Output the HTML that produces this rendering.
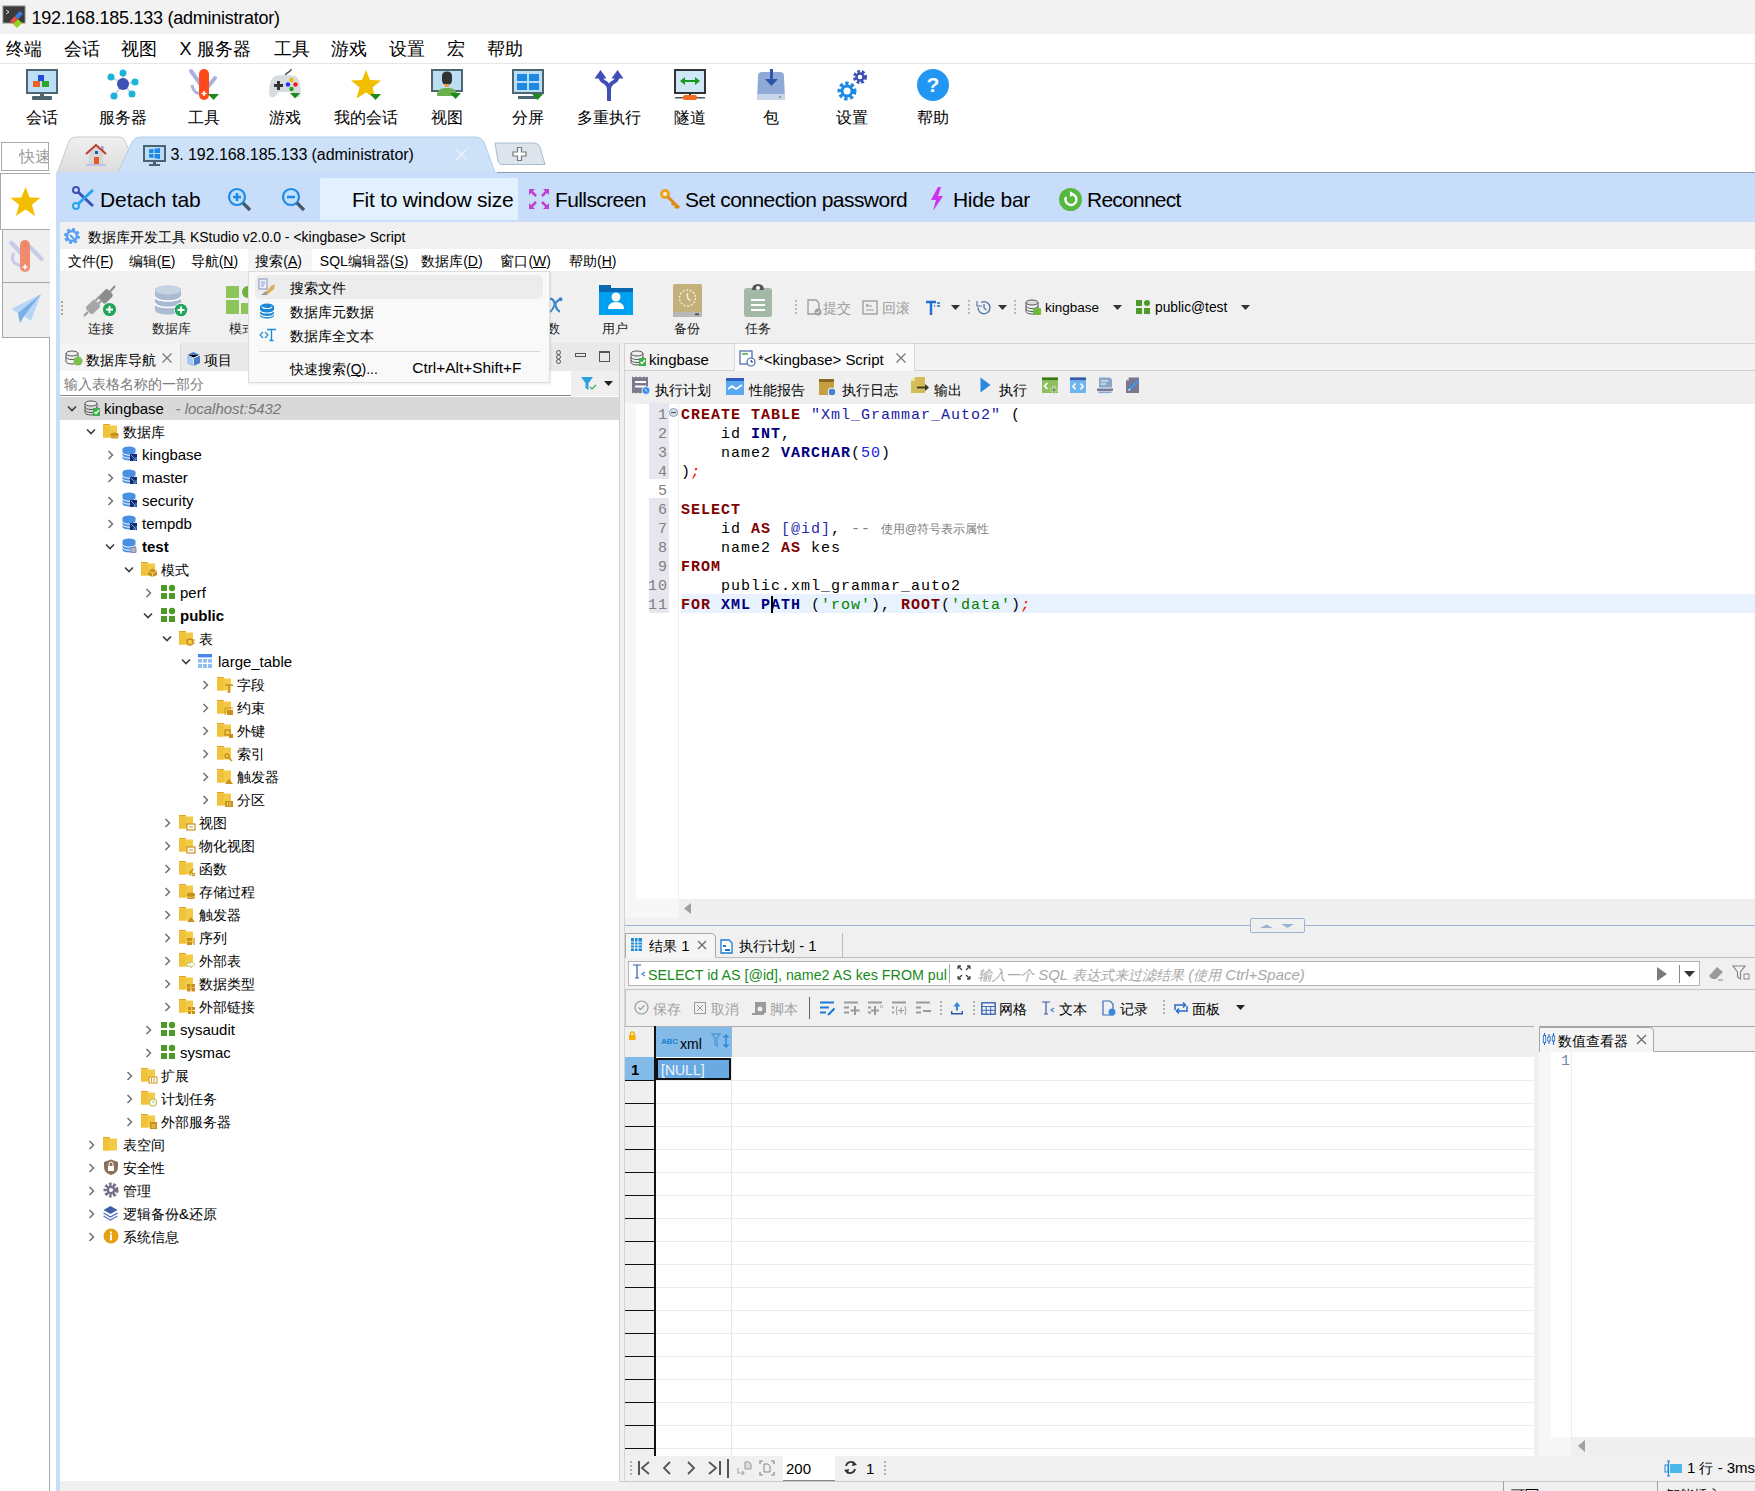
<!DOCTYPE html><html><head><meta charset="utf-8"><style>
html,body{margin:0;padding:0;width:1755px;height:1491px;overflow:hidden;background:#fff;font-family:"Liberation Sans",sans-serif;}
.r{position:absolute;box-sizing:border-box;}
.t{position:absolute;white-space:pre;}
svg.r{overflow:visible}
</style></head><body>
<div class="r" style="left:0px;top:0px;width:1755px;height:34px;background:#f2f2f2;"></div>
<svg class="r" style="left:2px;top:5px;" width="24" height="24" viewBox="0 0 24 24"><rect x="1" y="1" width="22" height="17" fill="#3b3b3b" stroke="#8a8a8a" stroke-width="1"/><path d="M4 5 L7 7 L4 9" stroke="#ddd" fill="none" stroke-width="1"/><path d="M8 16 L13 11 L16 14 L11 19 Z" fill="#e84b4b"/><path d="M13 11 L18 6 L21 9 L16 14 Z" fill="#3a7be0"/><path d="M11 19 L16 14 L20 18 L15 23 Z" fill="#8fd61a"/></svg>
<div class="t" style="left:31.6px;top:-2.24px;font-size:18.00px;line-height:40px;color:#000;font-weight:400;font-family:'Liberation Sans', sans-serif;letter-spacing:-0.26px;">192.168.185.133 (administrator)</div>
<div class="r" style="left:0px;top:34px;width:1755px;height:29px;background:#fff;"></div>
<div class="r" style="left:0px;top:63px;width:1755px;height:1px;background:#e6e6e6;"></div>
<div class="t" style="left:6px;top:29.26px;font-size:18.00px;line-height:40px;color:#000;font-weight:400;font-family:'Liberation Sans', sans-serif;">终端</div>
<div class="t" style="left:64px;top:29.26px;font-size:18.00px;line-height:40px;color:#000;font-weight:400;font-family:'Liberation Sans', sans-serif;">会话</div>
<div class="t" style="left:121px;top:29.26px;font-size:18.00px;line-height:40px;color:#000;font-weight:400;font-family:'Liberation Sans', sans-serif;">视图</div>
<div class="t" style="left:179.5px;top:29.26px;font-size:18.00px;line-height:40px;color:#000;font-weight:400;font-family:'Liberation Sans', sans-serif;">X 服务器</div>
<div class="t" style="left:273.5px;top:29.26px;font-size:18.00px;line-height:40px;color:#000;font-weight:400;font-family:'Liberation Sans', sans-serif;">工具</div>
<div class="t" style="left:331px;top:29.26px;font-size:18.00px;line-height:40px;color:#000;font-weight:400;font-family:'Liberation Sans', sans-serif;">游戏</div>
<div class="t" style="left:389px;top:29.26px;font-size:18.00px;line-height:40px;color:#000;font-weight:400;font-family:'Liberation Sans', sans-serif;">设置</div>
<div class="t" style="left:447px;top:29.26px;font-size:18.00px;line-height:40px;color:#000;font-weight:400;font-family:'Liberation Sans', sans-serif;">宏</div>
<div class="t" style="left:487px;top:29.26px;font-size:18.00px;line-height:40px;color:#000;font-weight:400;font-family:'Liberation Sans', sans-serif;">帮助</div>
<div class="r" style="left:0px;top:64px;width:1755px;height:73px;background:#fff;"></div>
<div class="t" style="left:26.0px;top:97.96px;font-size:16.00px;line-height:40px;color:#000;font-weight:400;font-family:'Liberation Sans', sans-serif;">会话</div>
<div class="t" style="left:99.0px;top:97.96px;font-size:16.00px;line-height:40px;color:#000;font-weight:400;font-family:'Liberation Sans', sans-serif;">服务器</div>
<div class="t" style="left:188.0px;top:97.96px;font-size:16.00px;line-height:40px;color:#000;font-weight:400;font-family:'Liberation Sans', sans-serif;">工具</div>
<div class="t" style="left:269.0px;top:97.96px;font-size:16.00px;line-height:40px;color:#000;font-weight:400;font-family:'Liberation Sans', sans-serif;">游戏</div>
<div class="t" style="left:334.0px;top:97.96px;font-size:16.00px;line-height:40px;color:#000;font-weight:400;font-family:'Liberation Sans', sans-serif;">我的会话</div>
<div class="t" style="left:431.0px;top:97.96px;font-size:16.00px;line-height:40px;color:#000;font-weight:400;font-family:'Liberation Sans', sans-serif;">视图</div>
<div class="t" style="left:512.0px;top:97.96px;font-size:16.00px;line-height:40px;color:#000;font-weight:400;font-family:'Liberation Sans', sans-serif;">分屏</div>
<div class="t" style="left:577.0px;top:97.96px;font-size:16.00px;line-height:40px;color:#000;font-weight:400;font-family:'Liberation Sans', sans-serif;">多重执行</div>
<div class="t" style="left:674.0px;top:97.96px;font-size:16.00px;line-height:40px;color:#000;font-weight:400;font-family:'Liberation Sans', sans-serif;">隧道</div>
<div class="t" style="left:763.0px;top:97.96px;font-size:16.00px;line-height:40px;color:#000;font-weight:400;font-family:'Liberation Sans', sans-serif;">包</div>
<div class="t" style="left:836.0px;top:97.96px;font-size:16.00px;line-height:40px;color:#000;font-weight:400;font-family:'Liberation Sans', sans-serif;">设置</div>
<div class="t" style="left:917.0px;top:97.96px;font-size:16.00px;line-height:40px;color:#000;font-weight:400;font-family:'Liberation Sans', sans-serif;">帮助</div>
<svg class="r" style="left:26px;top:69px;" width="32" height="32" viewBox="0 0 32 32"><rect x="1" y="1" width="30" height="23" fill="#bcdff6" stroke="#4d6570" stroke-width="2"/><rect x="14" y="24" width="4" height="4" fill="#4d6570"/><rect x="6" y="27" width="20" height="4" rx="1" fill="#4d6570"/><path d="M12 6 h6 v6 h-6z" fill="#1f4fe0"/><path d="M7 12 h7 v6 h-7z" fill="#f06020"/><path d="M16 12 h7 v6 h-7z" fill="#2ca52c"/></svg>
<svg class="r" style="left:107px;top:69px;" width="32" height="32" viewBox="0 0 32 32"><path d="M16 15 L16 4 M16 15 L4 8 M16 15 L28 13 M16 15 L7 27 M16 15 L25 25" stroke="#d0d6dc" stroke-width="2"/><circle cx="16" cy="15" r="6" fill="#3f51b5"/><circle cx="16" cy="4" r="3.5" fill="#1ab4d8"/><circle cx="4" cy="8" r="3.5" fill="#1ab4d8"/><circle cx="28" cy="13" r="3.5" fill="#1ab4d8"/><circle cx="7" cy="27" r="3.5" fill="#1ab4d8"/><circle cx="25" cy="25" r="3.5" fill="#1ab4d8"/></svg>
<svg class="r" style="left:188px;top:69px;" width="32" height="32" viewBox="0 0 32 32"><path d="M3 2 L13 16 M27 9 L18 20" stroke="#aab0e0" stroke-width="4" stroke-linecap="round"/><path d="M4 16 Q6 25 11 24" stroke="#aab0e0" stroke-width="3" fill="none"/><rect x="11" y="0" width="10" height="31" rx="5" fill="#ff4a1c"/><path d="M16 22 v5 M13.5 24.5 h5" stroke="#fff" stroke-width="1.6"/><path d="M20 25 h11 l-5.5 6z" fill="#1a8a1a"/></svg>
<svg class="r" style="left:269px;top:69px;" width="32" height="32" viewBox="0 0 32 32"><path d="M16 8 Q16 5 19 3.5 Q22 2 22 0" stroke="#4a5a60" fill="none" stroke-width="1.5"/><path d="M6 7 Q16 5 26 7 Q31 9 32 22 Q32 30 27 28 Q24 26 22 23 L10 23 Q8 26 5 28 Q0 30 0 22 Q1 9 6 7 Z" fill="#d9dcde"/><path d="M5 15 h3 v-3 h3 v3 h3 v3 h-3 v3 h-3 v-3 h-3 z" fill="#333"/><circle cx="22.5" cy="11" r="2.2" fill="#f0b800"/><circle cx="19" cy="15.5" r="2.2" fill="#1a3af0"/><circle cx="26.5" cy="15.5" r="2.2" fill="#f01a1a"/><circle cx="22.5" cy="20" r="2.2" fill="#1aa01a"/><path d="M21 24 h10 l-5 5.5z" fill="#1a8a1a"/></svg>
<svg class="r" style="left:350px;top:69px;" width="32" height="32" viewBox="0 0 32 32"><path d="M16 1 L20 11 L31 11.5 L22.5 18.5 L25.5 29.5 L16 23.5 L6.5 29.5 L9.5 18.5 L1 11.5 L12 11 Z" fill="#f2bf00"/><path d="M20 25 h11 l-5.5 6z" fill="#1a8a1a"/></svg>
<svg class="r" style="left:431px;top:69px;" width="32" height="32" viewBox="0 0 32 32"><rect x="1" y="1" width="30" height="21" fill="#bcdff6" stroke="#4d6570" stroke-width="2"/><path d="M11 7 Q11 2.5 16 2.5 Q21 2.5 21 7 L21 11 Q21 16 16 16 Q11 16 11 11 Z" fill="#333"/><rect x="14" y="15" width="4" height="3" fill="#f0a020"/><path d="M6 27 Q6 19 14 19 L18 19 Q26 19 26 27 Z" fill="#6ab04c"/><path d="M19 24 h11 l-5.5 6z" fill="#1a8a1a"/></svg>
<svg class="r" style="left:512px;top:69px;" width="32" height="32" viewBox="0 0 32 32"><rect x="1" y="1" width="30" height="23" fill="#bcdff6" stroke="#4d6570" stroke-width="2"/><rect x="5" y="5" width="10" height="7" fill="#1e88e5"/><rect x="17" y="5" width="10" height="7" fill="#1e88e5"/><rect x="5" y="14" width="10" height="7" fill="#1e88e5"/><rect x="17" y="14" width="10" height="7" fill="#1e88e5"/><rect x="6" y="27" width="20" height="3" fill="#4d6570"/><path d="M20 25 h11 l-5.5 6z" fill="#1a8a1a"/></svg>
<svg class="r" style="left:593px;top:69px;" width="32" height="32" viewBox="0 0 32 32"><path d="M16 32 V21 Q16 15 10.5 12.5 Q7.5 11 7.5 7 M16 21 Q16 15 21.5 12.5 Q24.5 11 24.5 7" stroke="#3f4fb5" stroke-width="4" fill="none"/><path d="M1.5 9.5 L7.5 1 L13.5 9.5 Z M18.5 9.5 L24.5 1 L30.5 9.5 Z" fill="#3f4fb5"/></svg>
<svg class="r" style="left:674px;top:69px;" width="32" height="32" viewBox="0 0 32 32"><rect x="1" y="1" width="30" height="23" fill="#cfe8f7" stroke="#333" stroke-width="2"/><path d="M6 12 L11 8 V16 Z M26 12 L21 8 V16 Z" fill="#1a9a1a"/><path d="M10 12 h12" stroke="#1a9a1a" stroke-width="2"/><rect x="15" y="24" width="2" height="5" fill="#333"/><rect x="1" y="28" width="30" height="1.5" fill="#555"/><rect x="9" y="26" width="14" height="5" rx="2" fill="#f26a1b"/></svg>
<svg class="r" style="left:755px;top:69px;" width="32" height="32" viewBox="0 0 32 32"><path d="M3 7 Q3 3 7 3 L25 3 Q29 3 29 7 L30 31 L2 31 Z" fill="#90aad8"/><rect x="2" y="25" width="28" height="6" fill="#c9d5ec"/><rect x="15" y="0" width="3" height="12" fill="#2f55a8"/><path d="M10 10 L16.5 17 L23 10 Z" fill="#2f55a8"/><circle cx="25" cy="28" r="1" fill="#4caf50"/></svg>
<svg class="r" style="left:836px;top:69px;" width="32" height="32" viewBox="0 0 32 32"><circle cx="11" cy="22" r="7" fill="none" stroke="#1e88e5" stroke-width="5" stroke-dasharray="3 2.2"/><circle cx="11" cy="22" r="5" fill="none" stroke="#1e88e5" stroke-width="3"/><circle cx="24" cy="8" r="5" fill="none" stroke="#3f51b5" stroke-width="4" stroke-dasharray="2.5 1.6"/><circle cx="24" cy="8" r="3.5" fill="none" stroke="#3f51b5" stroke-width="2.5"/></svg>
<svg class="r" style="left:917px;top:69px;" width="32" height="32" viewBox="0 0 32 32"><circle cx="16" cy="16" r="16" fill="#2196f3"/><text x="16" y="23" font-family="Liberation Sans" font-weight="700" font-size="21" fill="#fff" text-anchor="middle">?</text></svg>
<div class="r" style="left:0px;top:137px;width:1755px;height:35px;background:#fff;"></div>
<div class="r" style="left:1px;top:142px;width:48px;height:29px;background:#fff;border:1px solid #a9a9a9;"></div>
<div class="t" style="left:19px;top:137.46px;font-size:16.00px;line-height:40px;color:#9a9a9a;font-weight:400;font-family:'Liberation Sans', sans-serif;width:29px;overflow:hidden;">快速</div>
<svg class="r" style="left:50px;top:136px;" width="80" height="37" viewBox="0 0 80 37"><defs><linearGradient id="hg" x1="0" y1="0" x2="0" y2="1"><stop offset="0" stop-color="#f0f0f0"/><stop offset="1" stop-color="#dcdcdc"/></linearGradient></defs><path d="M7.5 36.5 L19 5 Q21 1 26 1 L69 1 Q73 1 75 5 L80 17 L78 36.5 Z" fill="url(#hg)" stroke="#c8c8c8" stroke-width="1"/></svg>
<svg class="r" style="left:84px;top:143px;" width="24" height="24" viewBox="0 0 24 24"><rect x="17" y="3" width="2.5" height="5" fill="#9aa4d8"/><path d="M5 10 L12 3.5 L19 10 V22 H5 Z" fill="#d6d6d6"/><path d="M2 11 L12 2 L22 11" stroke="#c0392b" stroke-width="2" fill="none"/><rect x="10" y="14" width="5" height="9" fill="#e2572b"/><rect x="11" y="8" width="3" height="3" fill="#1a5fa8"/><rect x="2" y="21" width="20" height="2" fill="#b8c4e8"/></svg>
<svg class="r" style="left:118px;top:136px;" width="380" height="37" viewBox="0 0 380 37"><path d="M0 36.5 L14 6 Q17 1 23 1 L358 1 Q363 1 366 6 L377 36.5 Z" fill="#cde1f9" stroke="#b6cde8" stroke-width="1"/></svg>
<svg class="r" style="left:143px;top:145px;" width="24" height="22" viewBox="0 0 24 22"><rect x="1" y="1" width="21" height="15" fill="#b9dcf5" stroke="#4a6272" stroke-width="2"/><rect x="10" y="16" width="3" height="3" fill="#4a6272"/><rect x="6" y="19" width="11" height="2" fill="#4a6272"/><path d="M6 4.5 L10.5 4 L10.5 8 L6 8 Z M11.5 3.8 L17 3 L17 8 L11.5 8 Z M6 9 L10.5 9 L10.5 13 L6 12.5 Z M11.5 9 L17 9 L17 14 L11.5 13.2 Z" fill="#1e88e5"/></svg>
<div class="t" style="left:170.4px;top:134.96px;font-size:16.00px;line-height:40px;color:#000;font-weight:400;font-family:'Liberation Sans', sans-serif;letter-spacing:-0.06px;">3. 192.168.185.133 (administrator)</div>
<svg class="r" style="left:454px;top:147px;" width="15" height="15" viewBox="0 0 15 15"><path d="M2 2 L13 13 M13 2 L2 13" stroke="#eef4fc" stroke-width="1.2"/></svg>
<svg class="r" style="left:494px;top:142px;" width="52" height="24" viewBox="0 0 52 24"><path d="M1 1 L40 1 Q44 1 46 5 L51 22.5 L8 22.5 Q5 22.5 4 19 Z" fill="#dde4ec" stroke="#a8bcd2" stroke-width="1"/><path d="M23.5 5.5 h4 v4.5 h4.5 v4 h-4.5 v4.5 h-4 v-4.5 h-4.5 v-4 h4.5 Z" fill="#fafafa" stroke="#7a7a7a" stroke-width="1.2"/></svg>
<div class="r" style="left:50px;top:172px;width:1705px;height:1319px;background:#fff;"></div>
<div class="r" style="left:56px;top:172px;width:1699px;height:1319px;background:#c8ddf9;"></div>
<div class="r" style="left:497px;top:172px;width:1258px;height:1px;background:#8d9db3;"></div>
<div class="r" style="left:320px;top:178px;width:198px;height:42px;background:#e3f0fd;border-radius:2px;"></div>
<svg class="r" style="left:71px;top:186px;" width="24" height="24" viewBox="0 0 24 24"><circle cx="5" cy="20" r="3" fill="none" stroke="#29a3f0" stroke-width="2"/><circle cx="5" cy="4" r="3" fill="none" stroke="#3f51b5" stroke-width="2"/><path d="M7 6 L22 20" stroke="#3f51b5" stroke-width="3"/><path d="M7 18 L22 4" stroke="#29a3f0" stroke-width="3"/></svg>
<svg class="r" style="left:227px;top:187px;" width="24" height="24" viewBox="0 0 24 24"><circle cx="10" cy="10" r="8" fill="#bfe0fa" stroke="#1e88e5" stroke-width="2.2"/><path d="M16 16 L23 23" stroke="#455a64" stroke-width="3.2"/><path d="M6 10 h8" stroke="#1e88e5" stroke-width="2.5"/><path d="M10 6 v8" stroke="#1e88e5" stroke-width="2.5"/></svg>
<svg class="r" style="left:281px;top:187px;" width="24" height="24" viewBox="0 0 24 24"><circle cx="10" cy="10" r="8" fill="#bfe0fa" stroke="#1e88e5" stroke-width="2.2"/><path d="M16 16 L23 23" stroke="#455a64" stroke-width="3.2"/><path d="M6 10 h8" stroke="#1e88e5" stroke-width="2.5"/></svg>
<svg class="r" style="left:528px;top:188px;" width="22" height="22" viewBox="0 0 22 22"><path d="M2 2 L8 8 M20 2 L14 8 M2 20 L8 14 M20 20 L14 14" stroke="#c040d0" stroke-width="2.5"/><path d="M1 1 h6 l-6 6z M21 1 h-6 l6 6z M1 21 h6 l-6 -6z M21 21 h-6 l6 -6z" fill="#c040d0"/></svg>
<svg class="r" style="left:659px;top:188px;" width="21" height="22" viewBox="0 0 21 22"><circle cx="6" cy="6" r="5" fill="#f0a020"/><circle cx="6" cy="6" r="2" fill="#fff3d0"/><path d="M9 9 L20 20 M15 15 L13 17 M18 18 L16 20" stroke="#e08a10" stroke-width="3"/></svg>
<svg class="r" style="left:929px;top:187px;" width="16" height="24" viewBox="0 0 16 24"><path d="M9 0 L2 13 L7 13 L4 24 L14 9 L9 9 L12 0 Z" fill="#d030f0"/></svg>
<svg class="r" style="left:1059px;top:188px;" width="23" height="23" viewBox="0 0 23 23"><circle cx="11.5" cy="11.5" r="11.5" fill="#57b840"/><path d="M7 9 A5.5 5.5 0 1 0 12 6" stroke="#fff" stroke-width="2.4" fill="none"/><path d="M11 3 L15 6 L11 9Z" fill="#fff"/></svg>
<div class="t" style="left:100px;top:180.42px;font-size:21.00px;line-height:40px;color:#000;font-weight:400;font-family:'Liberation Sans', sans-serif;letter-spacing:-0.09px;">Detach tab</div>
<div class="t" style="left:352px;top:180.42px;font-size:21.00px;line-height:40px;color:#000;font-weight:400;font-family:'Liberation Sans', sans-serif;letter-spacing:-0.24px;">Fit to window size</div>
<div class="t" style="left:555px;top:180.42px;font-size:21.00px;line-height:40px;color:#000;font-weight:400;font-family:'Liberation Sans', sans-serif;letter-spacing:-0.61px;">Fullscreen</div>
<div class="t" style="left:685px;top:180.42px;font-size:21.00px;line-height:40px;color:#000;font-weight:400;font-family:'Liberation Sans', sans-serif;letter-spacing:-0.54px;">Set connection password</div>
<div class="t" style="left:953px;top:180.42px;font-size:21.00px;line-height:40px;color:#000;font-weight:400;font-family:'Liberation Sans', sans-serif;letter-spacing:-0.3px;">Hide bar</div>
<div class="t" style="left:1087px;top:180.42px;font-size:21.00px;line-height:40px;color:#000;font-weight:400;font-family:'Liberation Sans', sans-serif;letter-spacing:-0.76px;">Reconnect</div>
<div class="r" style="left:0px;top:172px;width:50px;height:1319px;background:#fff;"></div>
<div class="r" style="left:0px;top:173px;width:50px;height:57px;background:#fff;border-left:1px solid #a8a8a8;border-top:1px solid #a8a8a8;border-bottom:1px solid #a8a8a8;"></div>
<div class="r" style="left:2px;top:230px;width:48px;height:53px;background:#efefef;border-left:1px solid #a8a8a8;border-bottom:1px solid #a8a8a8;"></div>
<div class="r" style="left:2px;top:283px;width:48px;height:55px;background:#efefef;border-left:1px solid #a8a8a8;border-bottom:1px solid #a8a8a8;"></div>
<div class="r" style="left:49px;top:338px;width:1px;height:1153px;background:#a8a8a8;"></div>
<svg class="r" style="left:9px;top:186px;" width="33" height="32" viewBox="0 0 33 32"><path d="M16.5 1 L20.6 11.5 L31.5 11.8 L23 18.8 L26 30 L16.5 23.6 L7 30 L10 18.8 L1.5 11.8 L12.4 11.5 Z" fill="#f2bf00"/></svg>
<svg class="r" style="left:10px;top:239px;" width="33" height="36" viewBox="0 0 33 36"><path d="M1.5 4 L12 15" stroke="#c8cbea" stroke-width="4.5" stroke-linecap="round"/><path d="M20 8 L31.5 20" stroke="#c8cbea" stroke-width="4" stroke-linecap="round"/><path d="M4 14 Q0 21 6 25 L11 27" stroke="#c8cbea" stroke-width="3" fill="none"/><rect x="10" y="1" width="10" height="32" rx="5" fill="#f28b6e"/><circle cx="15" cy="6" r="1.5" fill="#e87a60"/><path d="M15 25.5 v5 M12.5 28 h5" stroke="#fff" stroke-width="1.6"/></svg>
<svg class="r" style="left:10px;top:293px;" width="33" height="33" viewBox="0 0 33 33"><path d="M31 1 L1 16 L8 20 L10 30 L14 23 L21 28 Z" fill="#b7d6f5"/><path d="M31 1 L8 20 L10 30 L14 23 Z" fill="#7aaee6"/></svg>
<div class="r" style="left:60px;top:222px;width:1695px;height:27px;background:#f0f0f0;"></div>
<svg class="r" style="left:62px;top:226px;" width="20" height="20" viewBox="0 0 20 20"><circle cx="10" cy="10" r="6" fill="none" stroke="#5aa0f0" stroke-width="4" stroke-dasharray="2.6 2"/><circle cx="10" cy="10" r="5" fill="none" stroke="#5aa0f0" stroke-width="2.5"/><path d="M8 9 L13 14" stroke="#5aa0f0" stroke-width="2"/></svg>
<div class="t" style="left:88px;top:216.65px;font-size:14.00px;line-height:40px;color:#000;font-weight:400;font-family:'Liberation Sans', sans-serif;">数据库开发工具 KStudio v2.0.0 - &lt;kingbase&gt; Script</div>
<div class="r" style="left:60px;top:249px;width:1695px;height:22px;background:#fff;"></div>
<div class="r" style="left:248px;top:249px;width:64px;height:22px;background:#f5f5f5;"></div>
<div class="t" style="left:67.5px;top:240.65px;font-size:14.00px;line-height:40px;color:#000;font-weight:400;font-family:'Liberation Sans', sans-serif;">文件(F)</div>
<div class="t" style="left:128.7px;top:240.65px;font-size:14.00px;line-height:40px;color:#000;font-weight:400;font-family:'Liberation Sans', sans-serif;">编辑(E)</div>
<div class="t" style="left:190.7px;top:240.65px;font-size:14.00px;line-height:40px;color:#000;font-weight:400;font-family:'Liberation Sans', sans-serif;">导航(N)</div>
<div class="t" style="left:255.3px;top:240.65px;font-size:14.00px;line-height:40px;color:#000;font-weight:400;font-family:'Liberation Sans', sans-serif;">搜索(A)</div>
<div class="t" style="left:319.8px;top:240.65px;font-size:14.00px;line-height:40px;color:#000;font-weight:400;font-family:'Liberation Sans', sans-serif;">SQL编辑器(S)</div>
<div class="t" style="left:421.2px;top:240.65px;font-size:14.00px;line-height:40px;color:#000;font-weight:400;font-family:'Liberation Sans', sans-serif;">数据库(D)</div>
<div class="t" style="left:500.4px;top:240.65px;font-size:14.00px;line-height:40px;color:#000;font-weight:400;font-family:'Liberation Sans', sans-serif;">窗口(W)</div>
<div class="t" style="left:569px;top:240.65px;font-size:14.00px;line-height:40px;color:#000;font-weight:400;font-family:'Liberation Sans', sans-serif;">帮助(H)</div>
<div class="r" style="left:100.5px;top:267px;width:8px;height:1px;background:#000;"></div>
<div class="r" style="left:161.5px;top:267px;width:9px;height:1px;background:#000;"></div>
<div class="r" style="left:223.5px;top:267px;width:10px;height:1px;background:#000;"></div>
<div class="r" style="left:288px;top:267px;width:9px;height:1px;background:#000;"></div>
<div class="r" style="left:394.5px;top:267px;width:9px;height:1px;background:#000;"></div>
<div class="r" style="left:468px;top:267px;width:10px;height:1px;background:#000;"></div>
<div class="r" style="left:533px;top:267px;width:13px;height:1px;background:#000;"></div>
<div class="r" style="left:601.5px;top:267px;width:10px;height:1px;background:#000;"></div>
<div class="r" style="left:60px;top:271px;width:1695px;height:72px;background:#f0f0f0;"></div>
<div class="r" style="left:61px;top:301px;width:2px;height:2px;background:#b0a898;"></div>
<div class="r" style="left:61px;top:305px;width:2px;height:2px;background:#b0a898;"></div>
<div class="r" style="left:61px;top:309px;width:2px;height:2px;background:#b0a898;"></div>
<div class="r" style="left:61px;top:313px;width:2px;height:2px;background:#b0a898;"></div>
<div class="t" style="left:87.5px;top:309.00px;font-size:13.00px;line-height:40px;color:#222;font-weight:400;font-family:'Liberation Sans', sans-serif;">连接</div>
<div class="t" style="left:151.5px;top:309.00px;font-size:13.00px;line-height:40px;color:#222;font-weight:400;font-family:'Liberation Sans', sans-serif;">数据库</div>
<div class="t" style="left:229.0px;top:309.00px;font-size:13.00px;line-height:40px;color:#222;font-weight:400;font-family:'Liberation Sans', sans-serif;">模式</div>
<div class="t" style="left:602.0px;top:309.00px;font-size:13.00px;line-height:40px;color:#222;font-weight:400;font-family:'Liberation Sans', sans-serif;">用户</div>
<div class="t" style="left:674.0px;top:309.00px;font-size:13.00px;line-height:40px;color:#222;font-weight:400;font-family:'Liberation Sans', sans-serif;">备份</div>
<div class="t" style="left:745.0px;top:309.00px;font-size:13.00px;line-height:40px;color:#222;font-weight:400;font-family:'Liberation Sans', sans-serif;">任务</div>
<svg class="r" style="left:83px;top:283px;" width="33" height="33" viewBox="0 0 33 33"><g transform="rotate(-45 23 13)"><rect x="16" y="8" width="13" height="10" rx="2.5" fill="#8c8c8c"/></g><path d="M25.5 10.5 L32 3" stroke="#8c8c8c" stroke-width="2"/><path d="M16.5 13.5 L12.5 17.5 M19.5 16.5 L15.5 20.5" stroke="#9c9c9c" stroke-width="2.2"/><g transform="rotate(-45 10 24)"><rect x="3.5" y="19" width="13" height="10" rx="2.5" fill="#a6a6a6"/></g><path d="M5 29 L1 33" stroke="#a0a0a0" stroke-width="2.4"/><circle cx="26.5" cy="26.5" r="6.6" fill="#22a45a"/><path d="M26.5 23 v7 M23 26.5 h7" stroke="#fff" stroke-width="1.8"/></svg>
<svg class="r" style="left:155px;top:285px;" width="33" height="32" viewBox="0 0 33 32"><ellipse cx="13" cy="5" rx="13" ry="4.5" fill="#b8c8da"/><path d="M0 5 v20 a13 4.5 0 0 0 26 0 v-20" fill="#a8bbd0"/><path d="M0 11.5 a13 4.5 0 0 0 26 0 M0 18 a13 4.5 0 0 0 26 0" stroke="#fff" stroke-width="1.6" fill="none"/><ellipse cx="13" cy="5" rx="13" ry="4.5" fill="#c5d3e2"/><circle cx="26" cy="25" r="7" fill="#fff"/><circle cx="26" cy="25" r="6.3" fill="#22a45a"/><path d="M26 21.5 v7 M22.5 25 h7" stroke="#fff" stroke-width="1.8"/></svg>
<svg class="r" style="left:226px;top:286px;" width="30" height="30" viewBox="0 0 30 30"><rect x="0" y="0" width="13" height="12" fill="#8cc65a"/><circle cx="22" cy="6" r="6" fill="#6cb33c"/><rect x="0" y="14" width="13" height="14" fill="#8cc65a"/><rect x="15" y="17" width="13" height="11" fill="#8cc65a"/></svg>
<svg class="r" style="left:549px;top:296px;" width="14" height="18" viewBox="0 0 14 18"><path d="M1 3 Q4 2 6 8 Q8 15 11 15.5" stroke="#3a86c8" stroke-width="2.4" fill="none"/><path d="M11 3.5 Q7 5 5 10 Q3 15 0.5 16" stroke="#3a86c8" stroke-width="2" fill="none"/><circle cx="11.5" cy="3.2" r="2" fill="#3a86c8"/></svg>
<div class="t" style="left:534px;top:309.00px;font-size:13.00px;line-height:40px;color:#222;font-weight:400;font-family:'Liberation Sans', sans-serif;">函数</div>
<svg class="r" style="left:599px;top:285px;" width="34" height="30" viewBox="0 0 34 30"><path d="M0 0 h12 v3 h22 v27 h-34z" fill="#0a68b0"/><rect x="0" y="7" width="34" height="23" fill="#00a0f0"/><circle cx="17" cy="12" r="4.5" fill="#fff"/><path d="M9 24 Q9 17 17 17 Q25 17 25 24 Z" fill="#fff"/></svg>
<svg class="r" style="left:673px;top:284px;" width="30" height="33" viewBox="0 0 30 33"><rect x="0" y="0" width="29" height="28" rx="1.5" fill="#c4b07a"/><rect x="0" y="28" width="29" height="5" fill="#b8b8b8"/><rect x="22" y="29.5" width="4" height="1.6" fill="#444"/><circle cx="14.5" cy="14" r="8" fill="none" stroke="#f5ecd0" stroke-width="1.5" stroke-dasharray="2 1.6"/><path d="M14.5 9 v5 l3 3" stroke="#f5ecd0" stroke-width="1.5" fill="none"/></svg>
<svg class="r" style="left:744px;top:283px;" width="28" height="34" viewBox="0 0 28 34"><rect x="0" y="5" width="28" height="29" rx="3" fill="#a3b8a5"/><path d="M8 7 Q8 1 14 1 Q20 1 20 7 Z" fill="#555"/><circle cx="14" cy="5" r="2" fill="#fff"/><rect x="7" y="16" width="14" height="2" fill="#fff"/><rect x="7" y="21" width="14" height="2" fill="#fff"/><rect x="7" y="26" width="14" height="2" fill="#fff"/></svg>
<div class="r" style="left:795px;top:300px;width:1.5px;height:2px;background:#c0b8a8;"></div>
<div class="r" style="left:795px;top:304px;width:1.5px;height:2px;background:#c0b8a8;"></div>
<div class="r" style="left:795px;top:308px;width:1.5px;height:2px;background:#c0b8a8;"></div>
<div class="r" style="left:795px;top:312px;width:1.5px;height:2px;background:#c0b8a8;"></div>
<div class="r" style="left:968px;top:300px;width:1.5px;height:2px;background:#c0b8a8;"></div>
<div class="r" style="left:968px;top:304px;width:1.5px;height:2px;background:#c0b8a8;"></div>
<div class="r" style="left:968px;top:308px;width:1.5px;height:2px;background:#c0b8a8;"></div>
<div class="r" style="left:968px;top:312px;width:1.5px;height:2px;background:#c0b8a8;"></div>
<div class="r" style="left:1014px;top:300px;width:1.5px;height:2px;background:#c0b8a8;"></div>
<div class="r" style="left:1014px;top:304px;width:1.5px;height:2px;background:#c0b8a8;"></div>
<div class="r" style="left:1014px;top:308px;width:1.5px;height:2px;background:#c0b8a8;"></div>
<div class="r" style="left:1014px;top:312px;width:1.5px;height:2px;background:#c0b8a8;"></div>
<svg class="r" style="left:806px;top:299px;" width="17" height="17" viewBox="0 0 17 17"><path d="M2 1 h8 l3 3 v11 h-11z" fill="none" stroke="#9a9a9a" stroke-width="1.3"/><circle cx="12" cy="13" r="3.5" fill="#a0a0a0"/><path d="M10.5 13 l1 1 l2 -2" stroke="#fff" stroke-width="1" fill="none"/></svg>
<div class="t" style="left:823px;top:288.15px;font-size:14.00px;line-height:40px;color:#9a9a9a;font-weight:400;font-family:'Liberation Sans', sans-serif;">提交</div>
<svg class="r" style="left:862px;top:300px;" width="16" height="15" viewBox="0 0 16 15"><rect x="1" y="1" width="14" height="13" fill="none" stroke="#9a9a9a" stroke-width="1.3"/><path d="M4 6 h6 M4 6 l2-2 M4 10 h8" stroke="#9a9a9a" stroke-width="1.2"/></svg>
<div class="t" style="left:882px;top:288.15px;font-size:14.00px;line-height:40px;color:#9a9a9a;font-weight:400;font-family:'Liberation Sans', sans-serif;">回滚</div>
<svg class="r" style="left:925px;top:300px;" width="16" height="16" viewBox="0 0 16 16"><path d="M1 2 h10 M6 2 v13" stroke="#1e6fd0" stroke-width="2.4"/><path d="M12 3 h3 M12 6 h3 M9 6 h1" stroke="#1e6fd0" stroke-width="1.3"/></svg>
<svg class="r" style="left:951px;top:305px;" width="10" height="6" viewBox="0 0 10 6"><path d="M0 0 h9 l-4.5 5z" fill="#333"/></svg>
<svg class="r" style="left:975px;top:299px;" width="17" height="17" viewBox="0 0 17 17"><path d="M3 8.5 A6 6 0 1 0 6 3.5" stroke="#5577aa" stroke-width="1.4" fill="none"/><path d="M2 2 v5 h5" stroke="#5577aa" stroke-width="1.2" fill="none"/><path d="M9 5 v4 l2.5 2" stroke="#5577aa" stroke-width="1.3" fill="none"/></svg>
<svg class="r" style="left:998px;top:305px;" width="10" height="6" viewBox="0 0 10 6"><path d="M0 0 h9 l-4.5 5z" fill="#333"/></svg>
<svg class="r" style="left:1025px;top:299px;" width="17" height="17" viewBox="0 0 17 17"><ellipse cx="7" cy="3.5" rx="6" ry="2.5" fill="#ddd" stroke="#555"/><path d="M1 3.5 v9 a6 2.5 0 0 0 12 0 v-9 M1 7 a6 2.5 0 0 0 12 0 M1 10 a6 2.5 0 0 0 12 0" stroke="#555" fill="none"/><rect x="8" y="9" width="8" height="7" rx="1" fill="#6cba3c"/></svg>
<div class="t" style="left:1045px;top:288.32px;font-size:13.50px;line-height:40px;color:#000;font-weight:400;font-family:'Liberation Sans', sans-serif;">kingbase</div>
<svg class="r" style="left:1113px;top:305px;" width="10" height="6" viewBox="0 0 10 6"><path d="M0 0 h9 l-4.5 5z" fill="#333"/></svg>
<svg class="r" style="left:1136px;top:300px;" width="15" height="15" viewBox="0 0 15 15"><rect x="0" y="0" width="6" height="6" fill="#4c9a2a"/><circle cx="11" cy="3" r="3" fill="#4c9a2a"/><rect x="0" y="8" width="6" height="6" fill="#4c9a2a"/><rect x="8" y="8" width="6" height="6" fill="#4c9a2a"/></svg>
<div class="t" style="left:1155px;top:288.22px;font-size:13.80px;line-height:40px;color:#000;font-weight:400;font-family:'Liberation Sans', sans-serif;">public@test</div>
<svg class="r" style="left:1241px;top:305px;" width="10" height="6" viewBox="0 0 10 6"><path d="M0 0 h9 l-4.5 5z" fill="#333"/></svg>
<div class="r" style="left:60px;top:343px;width:560px;height:1138px;background:#fff;"></div>
<div class="r" style="left:60px;top:343px;width:560px;height:28px;background:#e9e9e9;"></div>
<div class="r" style="left:60px;top:343px;width:120px;height:28px;background:#f4f4f4;"></div>
<div class="r" style="left:180px;top:343px;width:1px;height:28px;background:#dcdcdc;"></div>
<svg class="r" style="left:65px;top:350px;" width="18" height="16" viewBox="0 0 18 16"><ellipse cx="7" cy="3.5" rx="6" ry="2.5" fill="#eee" stroke="#555"/><path d="M1 3.5 v8 a6 2.5 0 0 0 12 0 v-8 M1 7 a6 2.5 0 0 0 12 0" stroke="#555" fill="none"/><ellipse cx="13" cy="11" rx="4.5" ry="4.5" fill="#7cc04a"/></svg>
<div class="t" style="left:86px;top:339.65px;font-size:14.00px;line-height:40px;color:#000;font-weight:400;font-family:'Liberation Sans', sans-serif;">数据库导航</div>
<svg class="r" style="left:161px;top:352px;" width="12" height="12" viewBox="0 0 12 12"><path d="M1.5 1.5 L10.5 10.5 M10.5 1.5 L1.5 10.5" stroke="#777" stroke-width="1.2"/></svg>
<svg class="r" style="left:186px;top:351px;" width="15" height="16" viewBox="0 0 15 16"><path d="M7.5 1 L14 4 L14 12 L7.5 15 L1 12 L1 4 Z" fill="#4a7cc8"/><path d="M1 4 L7.5 7 L14 4 M7.5 7 v8" stroke="#fff" stroke-width="1"/><path d="M1 4 L7.5 7 L7.5 15 L1 12Z" fill="#a9c8f0"/></svg>
<div class="t" style="left:204px;top:339.65px;font-size:14.00px;line-height:40px;color:#000;font-weight:400;font-family:'Liberation Sans', sans-serif;">项目</div>
<svg class="r" style="left:555px;top:350px;" width="7" height="14" viewBox="0 0 7 14"><circle cx="3.5" cy="2.5" r="2" fill="none" stroke="#555"/><circle cx="3.5" cy="7" r="2" fill="none" stroke="#555"/><circle cx="3.5" cy="11.5" r="2" fill="none" stroke="#555"/></svg>
<div class="r" style="left:575px;top:353px;width:11px;height:4px;background:none;border:1px solid #555;"></div>
<div class="r" style="left:599px;top:351px;width:11px;height:11px;background:none;border:1px solid #555;border-top-width:2px;"></div>
<div class="r" style="left:60px;top:371px;width:511px;height:25px;background:#fff;"></div>
<div class="r" style="left:60px;top:395px;width:511px;height:1px;background:#888;"></div>
<div class="r" style="left:571px;top:371px;width:49px;height:25px;background:#efefef;"></div>
<div class="t" style="left:64px;top:364.15px;font-size:14.00px;line-height:40px;color:#7a7a7a;font-weight:400;font-family:'Liberation Sans', sans-serif;">输入表格名称的一部分</div>
<svg class="r" style="left:580px;top:376px;" width="17" height="15" viewBox="0 0 17 15"><path d="M1 1 h12 l-4.5 6 v7 l-3-2 v-5z" fill="#2aa0e0"/><path d="M10 11 l2 2 l4 -4" stroke="#3cb04a" stroke-width="1.2" fill="none"/></svg>
<svg class="r" style="left:604px;top:381px;" width="10" height="6" viewBox="0 0 10 6"><path d="M0 0 h9 l-4.5 5z" fill="#222"/></svg>
<div class="r" style="left:60px;top:397px;width:559px;height:23px;background:#d9d9d9;"></div>
<svg class="r" style="left:66.5px;top:405px;" width="10" height="8" viewBox="0 0 10 8"><path d="M1 1.5 L5 5.5 L9 1.5" stroke="#3c3c3c" stroke-width="1.6" fill="none"/></svg>
<svg class="r" style="left:84px;top:400px;" width="17" height="16" viewBox="0 0 17 16"><ellipse cx="7" cy="3.5" rx="6" ry="2.5" fill="#eee" stroke="#555"/><path d="M1 3.5 v9 a6 2.5 0 0 0 12 0 v-9 M1 7 a6 2.5 0 0 0 12 0 M1 10 a6 2.5 0 0 0 12 0" stroke="#555" fill="none"/><rect x="9" y="8" width="7" height="8" fill="#3cb04a"/><path d="M10.5 12 l1.5 1.5 l3 -3.5" stroke="#fff" stroke-width="1.2" fill="none"/></svg>
<div class="t" style="left:104px;top:388.81px;font-size:14.98px;line-height:40px;color:#000;font-weight:400;font-family:'Liberation Sans', sans-serif;"><span style="font-size:14.98px">kingbase</span></div>
<div class="t" style="left:175.5px;top:388.81px;font-size:14.98px;line-height:40px;color:#777;font-weight:400;font-family:'Liberation Sans', sans-serif;font-style:italic;"><span style="font-size:14.98px">- localhost:5432</span></div>
<svg class="r" style="left:85.5px;top:428px;" width="10" height="8" viewBox="0 0 10 8"><path d="M1 1.5 L5 5.5 L9 1.5" stroke="#3c3c3c" stroke-width="1.6" fill="none"/></svg>
<svg class="r" style="left:103px;top:423px;" width="17" height="16" viewBox="0 0 17 16"><path d="M0 1 h6.5 l1 1.5 h-7.5z" fill="#e3a21a"/><rect x="0" y="2.5" width="14" height="12" fill="#f3ca45"/><rect x="0" y="2.5" width="6.5" height="12" fill="#efc23a"/><ellipse cx="11.5" cy="11" rx="4" ry="1.6" fill="#c8901a"/><path d="M7.5 11 v3 a4 1.6 0 0 0 8 0 v-3" fill="#c8901a"/><path d="M7.5 12.5 a4 1.6 0 0 0 8 0" stroke="#f5d070" stroke-width="0.7" fill="none"/></svg>
<div class="t" style="left:123px;top:411.81px;font-size:14.98px;line-height:40px;color:#000;font-weight:400;font-family:'Liberation Sans', sans-serif;"><span style="font-size:14px">数据库</span></div>
<svg class="r" style="left:106.5px;top:450px;" width="8" height="10" viewBox="0 0 8 10"><path d="M1.5 1 L5.5 5 L1.5 9" stroke="#707070" stroke-width="1.5" fill="none"/></svg>
<svg class="r" style="left:122px;top:446px;" width="16" height="16" viewBox="0 0 16 16"><ellipse cx="7" cy="3" rx="6.5" ry="2.6" fill="#4a90e2"/><path d="M0.5 3 v9 a6.5 2.6 0 0 0 13 0 v-9" fill="#4a90e2"/><path d="M0.5 6.5 a6.5 2.6 0 0 0 13 0 M0.5 9.5 a6.5 2.6 0 0 0 13 0" stroke="#fff" stroke-width="1" fill="none"/><rect x="8" y="8" width="7" height="7" fill="#1b2a6b"/><path d="M9 9 L14 14 M11 14 h3 v-3" stroke="#5ab0ff" stroke-width="1"/></svg>
<div class="t" style="left:142px;top:434.81px;font-size:14.98px;line-height:40px;color:#000;font-weight:400;font-family:'Liberation Sans', sans-serif;"><span style="font-size:14.98px">kingbase</span></div>
<svg class="r" style="left:106.5px;top:473px;" width="8" height="10" viewBox="0 0 8 10"><path d="M1.5 1 L5.5 5 L1.5 9" stroke="#707070" stroke-width="1.5" fill="none"/></svg>
<svg class="r" style="left:122px;top:469px;" width="16" height="16" viewBox="0 0 16 16"><ellipse cx="7" cy="3" rx="6.5" ry="2.6" fill="#4a90e2"/><path d="M0.5 3 v9 a6.5 2.6 0 0 0 13 0 v-9" fill="#4a90e2"/><path d="M0.5 6.5 a6.5 2.6 0 0 0 13 0 M0.5 9.5 a6.5 2.6 0 0 0 13 0" stroke="#fff" stroke-width="1" fill="none"/><rect x="8" y="8" width="7" height="7" fill="#1b2a6b"/><path d="M9 9 L14 14 M11 14 h3 v-3" stroke="#5ab0ff" stroke-width="1"/></svg>
<div class="t" style="left:142px;top:457.81px;font-size:14.98px;line-height:40px;color:#000;font-weight:400;font-family:'Liberation Sans', sans-serif;"><span style="font-size:14.98px">master</span></div>
<svg class="r" style="left:106.5px;top:496px;" width="8" height="10" viewBox="0 0 8 10"><path d="M1.5 1 L5.5 5 L1.5 9" stroke="#707070" stroke-width="1.5" fill="none"/></svg>
<svg class="r" style="left:122px;top:492px;" width="16" height="16" viewBox="0 0 16 16"><ellipse cx="7" cy="3" rx="6.5" ry="2.6" fill="#4a90e2"/><path d="M0.5 3 v9 a6.5 2.6 0 0 0 13 0 v-9" fill="#4a90e2"/><path d="M0.5 6.5 a6.5 2.6 0 0 0 13 0 M0.5 9.5 a6.5 2.6 0 0 0 13 0" stroke="#fff" stroke-width="1" fill="none"/><rect x="8" y="8" width="7" height="7" fill="#1b2a6b"/><path d="M9 9 L14 14 M11 14 h3 v-3" stroke="#5ab0ff" stroke-width="1"/></svg>
<div class="t" style="left:142px;top:480.81px;font-size:14.98px;line-height:40px;color:#000;font-weight:400;font-family:'Liberation Sans', sans-serif;"><span style="font-size:14.98px">security</span></div>
<svg class="r" style="left:106.5px;top:519px;" width="8" height="10" viewBox="0 0 8 10"><path d="M1.5 1 L5.5 5 L1.5 9" stroke="#707070" stroke-width="1.5" fill="none"/></svg>
<svg class="r" style="left:122px;top:515px;" width="16" height="16" viewBox="0 0 16 16"><ellipse cx="7" cy="3" rx="6.5" ry="2.6" fill="#4a90e2"/><path d="M0.5 3 v9 a6.5 2.6 0 0 0 13 0 v-9" fill="#4a90e2"/><path d="M0.5 6.5 a6.5 2.6 0 0 0 13 0 M0.5 9.5 a6.5 2.6 0 0 0 13 0" stroke="#fff" stroke-width="1" fill="none"/><rect x="8" y="8" width="7" height="7" fill="#1b2a6b"/><path d="M9 9 L14 14 M11 14 h3 v-3" stroke="#5ab0ff" stroke-width="1"/></svg>
<div class="t" style="left:142px;top:503.81px;font-size:14.98px;line-height:40px;color:#000;font-weight:400;font-family:'Liberation Sans', sans-serif;"><span style="font-size:14.98px">tempdb</span></div>
<svg class="r" style="left:104.5px;top:543px;" width="10" height="8" viewBox="0 0 10 8"><path d="M1 1.5 L5 5.5 L9 1.5" stroke="#3c3c3c" stroke-width="1.6" fill="none"/></svg>
<svg class="r" style="left:122px;top:538px;" width="16" height="16" viewBox="0 0 16 16"><ellipse cx="7" cy="3" rx="6.5" ry="2.6" fill="#4a90e2"/><path d="M0.5 3 v9 a6.5 2.6 0 0 0 13 0 v-9" fill="#4a90e2"/><path d="M0.5 6.5 a6.5 2.6 0 0 0 13 0 M0.5 9.5 a6.5 2.6 0 0 0 13 0" stroke="#fff" stroke-width="1" fill="none"/><rect x="8.5" y="9" width="6" height="6" rx="1" fill="#8a8aa8"/><path d="M9.5 11 h4 M9.5 13 h4" stroke="#ddd" stroke-width="1"/></svg>
<div class="t" style="left:142px;top:526.81px;font-size:14.98px;line-height:40px;color:#000;font-weight:700;font-family:'Liberation Sans', sans-serif;"><span style="font-size:14.98px">test</span></div>
<svg class="r" style="left:123.5px;top:566px;" width="10" height="8" viewBox="0 0 10 8"><path d="M1 1.5 L5 5.5 L9 1.5" stroke="#3c3c3c" stroke-width="1.6" fill="none"/></svg>
<svg class="r" style="left:141px;top:561px;" width="17" height="16" viewBox="0 0 17 16"><path d="M0 1 h6.5 l1 1.5 h-7.5z" fill="#e3a21a"/><rect x="0" y="2.5" width="14" height="12" fill="#f3ca45"/><rect x="0" y="2.5" width="6.5" height="12" fill="#efc23a"/><path d="M11.5 7.5 L16 10 L16 14 L11.5 16 L7 14 L7 10 Z" fill="#c8901a"/><path d="M7 10 L11.5 12 L16 10 M11.5 12 v4" stroke="#f8e090" stroke-width="0.8" fill="none"/></svg>
<div class="t" style="left:161px;top:549.81px;font-size:14.98px;line-height:40px;color:#000;font-weight:400;font-family:'Liberation Sans', sans-serif;"><span style="font-size:14px">模式</span></div>
<svg class="r" style="left:144.5px;top:588px;" width="8" height="10" viewBox="0 0 8 10"><path d="M1.5 1 L5.5 5 L1.5 9" stroke="#707070" stroke-width="1.5" fill="none"/></svg>
<svg class="r" style="left:160px;top:584px;" width="16" height="16" viewBox="0 0 16 16"><rect x="1" y="1" width="6" height="6" fill="#4c9a2a"/><circle cx="12" cy="4" r="3.2" fill="#4c9a2a"/><rect x="1" y="9" width="6" height="6" fill="#4c9a2a"/><rect x="9" y="9" width="6" height="6" fill="#4c9a2a"/></svg>
<div class="t" style="left:180px;top:572.81px;font-size:14.98px;line-height:40px;color:#000;font-weight:400;font-family:'Liberation Sans', sans-serif;"><span style="font-size:14.98px">perf</span></div>
<svg class="r" style="left:142.5px;top:612px;" width="10" height="8" viewBox="0 0 10 8"><path d="M1 1.5 L5 5.5 L9 1.5" stroke="#3c3c3c" stroke-width="1.6" fill="none"/></svg>
<svg class="r" style="left:160px;top:607px;" width="16" height="16" viewBox="0 0 16 16"><rect x="1" y="1" width="6" height="6" fill="#4c9a2a"/><circle cx="12" cy="4" r="3.2" fill="#4c9a2a"/><rect x="1" y="9" width="6" height="6" fill="#4c9a2a"/><rect x="9" y="9" width="6" height="6" fill="#4c9a2a"/></svg>
<div class="t" style="left:180px;top:595.81px;font-size:14.98px;line-height:40px;color:#000;font-weight:700;font-family:'Liberation Sans', sans-serif;"><span style="font-size:14.98px">public</span></div>
<svg class="r" style="left:161.5px;top:635px;" width="10" height="8" viewBox="0 0 10 8"><path d="M1 1.5 L5 5.5 L9 1.5" stroke="#3c3c3c" stroke-width="1.6" fill="none"/></svg>
<svg class="r" style="left:179px;top:630px;" width="17" height="16" viewBox="0 0 17 16"><path d="M0 1 h6.5 l1 1.5 h-7.5z" fill="#e3a21a"/><rect x="0" y="2.5" width="14" height="12" fill="#f3ca45"/><rect x="0" y="2.5" width="6.5" height="12" fill="#efc23a"/><circle cx="11" cy="12" r="3" fill="none" stroke="#c8901a" stroke-width="1.4"/><path d="M7 10 h1.5 M7 13 h1.5 M14 10 h2 M14 13 h2" stroke="#c8901a" stroke-width="1"/></svg>
<div class="t" style="left:199px;top:618.81px;font-size:14.98px;line-height:40px;color:#000;font-weight:400;font-family:'Liberation Sans', sans-serif;"><span style="font-size:14px">表</span></div>
<svg class="r" style="left:180.5px;top:658px;" width="10" height="8" viewBox="0 0 10 8"><path d="M1 1.5 L5 5.5 L9 1.5" stroke="#3c3c3c" stroke-width="1.6" fill="none"/></svg>
<svg class="r" style="left:198px;top:654px;" width="15" height="15" viewBox="0 0 15 15"><rect x="0" y="0" width="14" height="3.4" fill="#4a86f0"/><g fill="#8ec0f0"><rect x="0" y="5" width="4" height="3.6"/><rect x="5" y="5" width="4" height="3.6"/><rect x="10" y="5" width="4" height="3.6"/><rect x="0" y="10" width="4" height="4"/><rect x="5" y="10" width="4" height="4"/><rect x="10" y="10" width="4" height="4"/></g></svg>
<div class="t" style="left:218px;top:641.81px;font-size:14.98px;line-height:40px;color:#000;font-weight:400;font-family:'Liberation Sans', sans-serif;"><span style="font-size:14.98px">large_table</span></div>
<svg class="r" style="left:201.5px;top:680px;" width="8" height="10" viewBox="0 0 8 10"><path d="M1.5 1 L5.5 5 L1.5 9" stroke="#707070" stroke-width="1.5" fill="none"/></svg>
<svg class="r" style="left:217px;top:676px;" width="17" height="16" viewBox="0 0 17 16"><path d="M0 1 h6.5 l1 1.5 h-7.5z" fill="#e3a21a"/><rect x="0" y="2.5" width="14" height="12" fill="#f3ca45"/><rect x="0" y="2.5" width="6.5" height="12" fill="#efc23a"/><path d="M8 9 h8 M12 9 v7 M10.5 16 h3" stroke="#c8901a" stroke-width="1.6"/></svg>
<div class="t" style="left:237px;top:664.81px;font-size:14.98px;line-height:40px;color:#000;font-weight:400;font-family:'Liberation Sans', sans-serif;"><span style="font-size:14px">字段</span></div>
<svg class="r" style="left:201.5px;top:703px;" width="8" height="10" viewBox="0 0 8 10"><path d="M1.5 1 L5.5 5 L1.5 9" stroke="#707070" stroke-width="1.5" fill="none"/></svg>
<svg class="r" style="left:217px;top:699px;" width="17" height="16" viewBox="0 0 17 16"><path d="M0 1 h6.5 l1 1.5 h-7.5z" fill="#e3a21a"/><rect x="0" y="2.5" width="14" height="12" fill="#f3ca45"/><rect x="0" y="2.5" width="6.5" height="12" fill="#efc23a"/><path d="M8 16 V9 h8" stroke="#c8901a" stroke-width="1" fill="none"/><rect x="10" y="11" width="6" height="5" fill="#c8901a"/></svg>
<div class="t" style="left:237px;top:687.81px;font-size:14.98px;line-height:40px;color:#000;font-weight:400;font-family:'Liberation Sans', sans-serif;"><span style="font-size:14px">约束</span></div>
<svg class="r" style="left:201.5px;top:726px;" width="8" height="10" viewBox="0 0 8 10"><path d="M1.5 1 L5.5 5 L1.5 9" stroke="#707070" stroke-width="1.5" fill="none"/></svg>
<svg class="r" style="left:217px;top:722px;" width="17" height="16" viewBox="0 0 17 16"><path d="M0 1 h6.5 l1 1.5 h-7.5z" fill="#e3a21a"/><rect x="0" y="2.5" width="14" height="12" fill="#f3ca45"/><rect x="0" y="2.5" width="6.5" height="12" fill="#efc23a"/><rect x="8" y="8" width="5" height="5" fill="none" stroke="#c8901a" stroke-width="1.4"/><rect x="12" y="12" width="4" height="4" fill="#c8901a"/></svg>
<div class="t" style="left:237px;top:710.81px;font-size:14.98px;line-height:40px;color:#000;font-weight:400;font-family:'Liberation Sans', sans-serif;"><span style="font-size:14px">外键</span></div>
<svg class="r" style="left:201.5px;top:749px;" width="8" height="10" viewBox="0 0 8 10"><path d="M1.5 1 L5.5 5 L1.5 9" stroke="#707070" stroke-width="1.5" fill="none"/></svg>
<svg class="r" style="left:217px;top:745px;" width="17" height="16" viewBox="0 0 17 16"><path d="M0 1 h6.5 l1 1.5 h-7.5z" fill="#e3a21a"/><rect x="0" y="2.5" width="14" height="12" fill="#f3ca45"/><rect x="0" y="2.5" width="6.5" height="12" fill="#efc23a"/><circle cx="10" cy="11" r="2" fill="none" stroke="#c8901a" stroke-width="1.3"/><path d="M11.5 12.5 L15 16" stroke="#c8901a" stroke-width="1.6"/></svg>
<div class="t" style="left:237px;top:733.81px;font-size:14.98px;line-height:40px;color:#000;font-weight:400;font-family:'Liberation Sans', sans-serif;"><span style="font-size:14px">索引</span></div>
<svg class="r" style="left:201.5px;top:772px;" width="8" height="10" viewBox="0 0 8 10"><path d="M1.5 1 L5.5 5 L1.5 9" stroke="#707070" stroke-width="1.5" fill="none"/></svg>
<svg class="r" style="left:217px;top:768px;" width="17" height="16" viewBox="0 0 17 16"><path d="M0 1 h6.5 l1 1.5 h-7.5z" fill="#e3a21a"/><rect x="0" y="2.5" width="14" height="12" fill="#f3ca45"/><rect x="0" y="2.5" width="6.5" height="12" fill="#efc23a"/><path d="M8 16 L12 11 L16 16 Z" fill="#c8901a"/></svg>
<div class="t" style="left:237px;top:756.81px;font-size:14.98px;line-height:40px;color:#000;font-weight:400;font-family:'Liberation Sans', sans-serif;"><span style="font-size:14px">触发器</span></div>
<svg class="r" style="left:201.5px;top:795px;" width="8" height="10" viewBox="0 0 8 10"><path d="M1.5 1 L5.5 5 L1.5 9" stroke="#707070" stroke-width="1.5" fill="none"/></svg>
<svg class="r" style="left:217px;top:791px;" width="17" height="16" viewBox="0 0 17 16"><path d="M0 1 h6.5 l1 1.5 h-7.5z" fill="#e3a21a"/><rect x="0" y="2.5" width="14" height="12" fill="#f3ca45"/><rect x="0" y="2.5" width="6.5" height="12" fill="#efc23a"/><rect x="8" y="10" width="8" height="6" fill="#c8901a"/><path d="M10.5 11 v4 M13 11 v4" stroke="#f8e090" stroke-width="0.9"/></svg>
<div class="t" style="left:237px;top:779.81px;font-size:14.98px;line-height:40px;color:#000;font-weight:400;font-family:'Liberation Sans', sans-serif;"><span style="font-size:14px">分区</span></div>
<svg class="r" style="left:163.5px;top:818px;" width="8" height="10" viewBox="0 0 8 10"><path d="M1.5 1 L5.5 5 L1.5 9" stroke="#707070" stroke-width="1.5" fill="none"/></svg>
<svg class="r" style="left:179px;top:814px;" width="17" height="16" viewBox="0 0 17 16"><path d="M0 1 h6.5 l1 1.5 h-7.5z" fill="#e3a21a"/><rect x="0" y="2.5" width="14" height="12" fill="#f3ca45"/><rect x="0" y="2.5" width="6.5" height="12" fill="#efc23a"/><rect x="8" y="10" width="8" height="6" fill="#fff" stroke="#c8901a" stroke-width="1.2"/><path d="M10 13 h4" stroke="#c8901a"/></svg>
<div class="t" style="left:199px;top:802.81px;font-size:14.98px;line-height:40px;color:#000;font-weight:400;font-family:'Liberation Sans', sans-serif;"><span style="font-size:14px">视图</span></div>
<svg class="r" style="left:163.5px;top:841px;" width="8" height="10" viewBox="0 0 8 10"><path d="M1.5 1 L5.5 5 L1.5 9" stroke="#707070" stroke-width="1.5" fill="none"/></svg>
<svg class="r" style="left:179px;top:837px;" width="17" height="16" viewBox="0 0 17 16"><path d="M0 1 h6.5 l1 1.5 h-7.5z" fill="#e3a21a"/><rect x="0" y="2.5" width="14" height="12" fill="#f3ca45"/><rect x="0" y="2.5" width="6.5" height="12" fill="#efc23a"/><rect x="8" y="10" width="8" height="6" fill="#fff" stroke="#c8901a" stroke-width="1.2"/><path d="M10 13 h4" stroke="#c8901a"/></svg>
<div class="t" style="left:199px;top:825.81px;font-size:14.98px;line-height:40px;color:#000;font-weight:400;font-family:'Liberation Sans', sans-serif;"><span style="font-size:14px">物化视图</span></div>
<svg class="r" style="left:163.5px;top:864px;" width="8" height="10" viewBox="0 0 8 10"><path d="M1.5 1 L5.5 5 L1.5 9" stroke="#707070" stroke-width="1.5" fill="none"/></svg>
<svg class="r" style="left:179px;top:860px;" width="17" height="16" viewBox="0 0 17 16"><path d="M0 1 h6.5 l1 1.5 h-7.5z" fill="#e3a21a"/><rect x="0" y="2.5" width="14" height="12" fill="#f3ca45"/><rect x="0" y="2.5" width="6.5" height="12" fill="#efc23a"/><path d="M11 16 Q12 9 15 9 M9.5 12 h4 M13 13 l3 3 M16 13 l-3 3" stroke="#c8901a" stroke-width="1.1" fill="none"/></svg>
<div class="t" style="left:199px;top:848.81px;font-size:14.98px;line-height:40px;color:#000;font-weight:400;font-family:'Liberation Sans', sans-serif;"><span style="font-size:14px">函数</span></div>
<svg class="r" style="left:163.5px;top:887px;" width="8" height="10" viewBox="0 0 8 10"><path d="M1.5 1 L5.5 5 L1.5 9" stroke="#707070" stroke-width="1.5" fill="none"/></svg>
<svg class="r" style="left:179px;top:883px;" width="17" height="16" viewBox="0 0 17 16"><path d="M0 1 h6.5 l1 1.5 h-7.5z" fill="#e3a21a"/><rect x="0" y="2.5" width="14" height="12" fill="#f3ca45"/><rect x="0" y="2.5" width="6.5" height="12" fill="#efc23a"/><ellipse cx="12" cy="11" rx="4" ry="1.6" fill="#c8901a"/><path d="M8 11 v3.5 a4 1.6 0 0 0 8 0 v-3.5" fill="#c8901a"/><path d="M8 12.8 a4 1.6 0 0 0 8 0" stroke="#f8e090" stroke-width="0.7" fill="none"/></svg>
<div class="t" style="left:199px;top:871.81px;font-size:14.98px;line-height:40px;color:#000;font-weight:400;font-family:'Liberation Sans', sans-serif;"><span style="font-size:14px">存储过程</span></div>
<svg class="r" style="left:163.5px;top:910px;" width="8" height="10" viewBox="0 0 8 10"><path d="M1.5 1 L5.5 5 L1.5 9" stroke="#707070" stroke-width="1.5" fill="none"/></svg>
<svg class="r" style="left:179px;top:906px;" width="17" height="16" viewBox="0 0 17 16"><path d="M0 1 h6.5 l1 1.5 h-7.5z" fill="#e3a21a"/><rect x="0" y="2.5" width="14" height="12" fill="#f3ca45"/><rect x="0" y="2.5" width="6.5" height="12" fill="#efc23a"/><path d="M8 16 L12 11 L16 16 Z" fill="#c8901a"/></svg>
<div class="t" style="left:199px;top:894.81px;font-size:14.98px;line-height:40px;color:#000;font-weight:400;font-family:'Liberation Sans', sans-serif;"><span style="font-size:14px">触发器</span></div>
<svg class="r" style="left:163.5px;top:933px;" width="8" height="10" viewBox="0 0 8 10"><path d="M1.5 1 L5.5 5 L1.5 9" stroke="#707070" stroke-width="1.5" fill="none"/></svg>
<svg class="r" style="left:179px;top:929px;" width="17" height="16" viewBox="0 0 17 16"><path d="M0 1 h6.5 l1 1.5 h-7.5z" fill="#e3a21a"/><rect x="0" y="2.5" width="14" height="12" fill="#f3ca45"/><rect x="0" y="2.5" width="6.5" height="12" fill="#efc23a"/><rect x="8" y="9" width="5" height="3" fill="#c8901a"/><rect x="8" y="13" width="5" height="3" fill="#c8901a"/><path d="M15 9 v7" stroke="#c8901a" stroke-width="1.2"/></svg>
<div class="t" style="left:199px;top:917.81px;font-size:14.98px;line-height:40px;color:#000;font-weight:400;font-family:'Liberation Sans', sans-serif;"><span style="font-size:14px">序列</span></div>
<svg class="r" style="left:163.5px;top:956px;" width="8" height="10" viewBox="0 0 8 10"><path d="M1.5 1 L5.5 5 L1.5 9" stroke="#707070" stroke-width="1.5" fill="none"/></svg>
<svg class="r" style="left:179px;top:952px;" width="17" height="16" viewBox="0 0 17 16"><path d="M0 1 h6.5 l1 1.5 h-7.5z" fill="#e3a21a"/><rect x="0" y="2.5" width="14" height="12" fill="#f3ca45"/><rect x="0" y="2.5" width="6.5" height="12" fill="#efc23a"/><path d="M8 11 h4 v-2 l4 3.5 l-4 3.5 v-2 h-4z" fill="#fff" stroke="#b8c070" stroke-width="0.9"/></svg>
<div class="t" style="left:199px;top:940.81px;font-size:14.98px;line-height:40px;color:#000;font-weight:400;font-family:'Liberation Sans', sans-serif;"><span style="font-size:14px">外部表</span></div>
<svg class="r" style="left:163.5px;top:979px;" width="8" height="10" viewBox="0 0 8 10"><path d="M1.5 1 L5.5 5 L1.5 9" stroke="#707070" stroke-width="1.5" fill="none"/></svg>
<svg class="r" style="left:179px;top:975px;" width="17" height="16" viewBox="0 0 17 16"><path d="M0 1 h6.5 l1 1.5 h-7.5z" fill="#e3a21a"/><rect x="0" y="2.5" width="14" height="12" fill="#f3ca45"/><rect x="0" y="2.5" width="6.5" height="12" fill="#efc23a"/><rect x="8" y="9" width="3.5" height="3.5" fill="#c8901a"/><rect x="12.5" y="9" width="3.5" height="3.5" fill="#c8901a"/><rect x="8" y="13" width="3.5" height="3.5" fill="#c8901a"/><rect x="12.5" y="13" width="3.5" height="3.5" fill="#c8901a"/></svg>
<div class="t" style="left:199px;top:963.81px;font-size:14.98px;line-height:40px;color:#000;font-weight:400;font-family:'Liberation Sans', sans-serif;"><span style="font-size:14px">数据类型</span></div>
<svg class="r" style="left:163.5px;top:1002px;" width="8" height="10" viewBox="0 0 8 10"><path d="M1.5 1 L5.5 5 L1.5 9" stroke="#707070" stroke-width="1.5" fill="none"/></svg>
<svg class="r" style="left:179px;top:998px;" width="17" height="16" viewBox="0 0 17 16"><path d="M0 1 h6.5 l1 1.5 h-7.5z" fill="#e3a21a"/><rect x="0" y="2.5" width="14" height="12" fill="#f3ca45"/><rect x="0" y="2.5" width="6.5" height="12" fill="#efc23a"/><rect x="9" y="9" width="3" height="3" fill="#c8901a"/><rect x="13" y="9" width="3" height="3" fill="#c8901a"/><rect x="9" y="13" width="3" height="3" fill="#c8901a"/><rect x="13" y="13" width="3" height="3" fill="#c8901a"/></svg>
<div class="t" style="left:199px;top:986.81px;font-size:14.98px;line-height:40px;color:#000;font-weight:400;font-family:'Liberation Sans', sans-serif;"><span style="font-size:14px">外部链接</span></div>
<svg class="r" style="left:144.5px;top:1025px;" width="8" height="10" viewBox="0 0 8 10"><path d="M1.5 1 L5.5 5 L1.5 9" stroke="#707070" stroke-width="1.5" fill="none"/></svg>
<svg class="r" style="left:160px;top:1021px;" width="16" height="16" viewBox="0 0 16 16"><rect x="1" y="1" width="6" height="6" fill="#4c9a2a"/><circle cx="12" cy="4" r="3.2" fill="#4c9a2a"/><rect x="1" y="9" width="6" height="6" fill="#4c9a2a"/><rect x="9" y="9" width="6" height="6" fill="#4c9a2a"/></svg>
<div class="t" style="left:180px;top:1009.81px;font-size:14.98px;line-height:40px;color:#000;font-weight:400;font-family:'Liberation Sans', sans-serif;"><span style="font-size:14.98px">sysaudit</span></div>
<svg class="r" style="left:144.5px;top:1048px;" width="8" height="10" viewBox="0 0 8 10"><path d="M1.5 1 L5.5 5 L1.5 9" stroke="#707070" stroke-width="1.5" fill="none"/></svg>
<svg class="r" style="left:160px;top:1044px;" width="16" height="16" viewBox="0 0 16 16"><rect x="1" y="1" width="6" height="6" fill="#4c9a2a"/><circle cx="12" cy="4" r="3.2" fill="#4c9a2a"/><rect x="1" y="9" width="6" height="6" fill="#4c9a2a"/><rect x="9" y="9" width="6" height="6" fill="#4c9a2a"/></svg>
<div class="t" style="left:180px;top:1032.81px;font-size:14.98px;line-height:40px;color:#000;font-weight:400;font-family:'Liberation Sans', sans-serif;"><span style="font-size:14.98px">sysmac</span></div>
<svg class="r" style="left:125.5px;top:1071px;" width="8" height="10" viewBox="0 0 8 10"><path d="M1.5 1 L5.5 5 L1.5 9" stroke="#707070" stroke-width="1.5" fill="none"/></svg>
<svg class="r" style="left:141px;top:1067px;" width="17" height="16" viewBox="0 0 17 16"><path d="M0 1 h6.5 l1 1.5 h-7.5z" fill="#e3a21a"/><rect x="0" y="2.5" width="14" height="12" fill="#f3ca45"/><rect x="0" y="2.5" width="6.5" height="12" fill="#efc23a"/><rect x="8" y="10" width="8" height="6" fill="#fff" stroke="#c8901a" stroke-width="1"/><path d="M10.5 11 v4 M13 11 v4" stroke="#c8901a" stroke-width="0.9"/></svg>
<div class="t" style="left:161px;top:1055.81px;font-size:14.98px;line-height:40px;color:#000;font-weight:400;font-family:'Liberation Sans', sans-serif;"><span style="font-size:14px">扩展</span></div>
<svg class="r" style="left:125.5px;top:1094px;" width="8" height="10" viewBox="0 0 8 10"><path d="M1.5 1 L5.5 5 L1.5 9" stroke="#707070" stroke-width="1.5" fill="none"/></svg>
<svg class="r" style="left:141px;top:1090px;" width="17" height="16" viewBox="0 0 17 16"><path d="M0 1 h6.5 l1 1.5 h-7.5z" fill="#e3a21a"/><rect x="0" y="2.5" width="14" height="12" fill="#f3ca45"/><rect x="0" y="2.5" width="6.5" height="12" fill="#efc23a"/><circle cx="12" cy="12.5" r="3.5" fill="#fff" stroke="#b8c040" stroke-width="1.1"/><path d="M12 10.5 v2 h1.5" stroke="#b8c040" stroke-width="0.9" fill="none"/></svg>
<div class="t" style="left:161px;top:1078.81px;font-size:14.98px;line-height:40px;color:#000;font-weight:400;font-family:'Liberation Sans', sans-serif;"><span style="font-size:14px">计划任务</span></div>
<svg class="r" style="left:125.5px;top:1117px;" width="8" height="10" viewBox="0 0 8 10"><path d="M1.5 1 L5.5 5 L1.5 9" stroke="#707070" stroke-width="1.5" fill="none"/></svg>
<svg class="r" style="left:141px;top:1113px;" width="17" height="16" viewBox="0 0 17 16"><path d="M0 1 h6.5 l1 1.5 h-7.5z" fill="#e3a21a"/><rect x="0" y="2.5" width="14" height="12" fill="#f3ca45"/><rect x="0" y="2.5" width="6.5" height="12" fill="#efc23a"/><rect x="9" y="9" width="7" height="7" fill="#c8901a"/><path d="M10.5 12 h4 M10.5 14 h4" stroke="#f8e090" stroke-width="0.9"/></svg>
<div class="t" style="left:161px;top:1101.81px;font-size:14.98px;line-height:40px;color:#000;font-weight:400;font-family:'Liberation Sans', sans-serif;"><span style="font-size:14px">外部服务器</span></div>
<svg class="r" style="left:87.5px;top:1140px;" width="8" height="10" viewBox="0 0 8 10"><path d="M1.5 1 L5.5 5 L1.5 9" stroke="#707070" stroke-width="1.5" fill="none"/></svg>
<svg class="r" style="left:103px;top:1136px;" width="17" height="16" viewBox="0 0 17 16"><path d="M0 1 h6.5 l1 1.5 h-7.5z" fill="#e3a21a"/><rect x="0" y="2.5" width="14" height="12" fill="#f3ca45"/><rect x="0" y="2.5" width="6.5" height="12" fill="#efc23a"/></svg>
<div class="t" style="left:123px;top:1124.81px;font-size:14.98px;line-height:40px;color:#000;font-weight:400;font-family:'Liberation Sans', sans-serif;"><span style="font-size:14px">表空间</span></div>
<svg class="r" style="left:87.5px;top:1163px;" width="8" height="10" viewBox="0 0 8 10"><path d="M1.5 1 L5.5 5 L1.5 9" stroke="#707070" stroke-width="1.5" fill="none"/></svg>
<svg class="r" style="left:103px;top:1159px;" width="16" height="16" viewBox="0 0 16 16"><path d="M8 0.5 L15 3 V8 Q15 14 8 16 Q1 14 1 8 V3 Z" fill="#8a6f5a"/><rect x="5" y="7" width="6" height="5" fill="#fff"/><path d="M6 7 v-2 a2 2 0 0 1 4 0 v2" stroke="#fff" fill="none"/></svg>
<div class="t" style="left:123px;top:1147.81px;font-size:14.98px;line-height:40px;color:#000;font-weight:400;font-family:'Liberation Sans', sans-serif;"><span style="font-size:14px">安全性</span></div>
<svg class="r" style="left:87.5px;top:1186px;" width="8" height="10" viewBox="0 0 8 10"><path d="M1.5 1 L5.5 5 L1.5 9" stroke="#707070" stroke-width="1.5" fill="none"/></svg>
<svg class="r" style="left:103px;top:1182px;" width="16" height="16" viewBox="0 0 16 16"><circle cx="8" cy="8" r="5.5" fill="none" stroke="#77708a" stroke-width="4" stroke-dasharray="2.4 1.5"/><circle cx="8" cy="8" r="4.5" fill="#77708a"/><circle cx="8" cy="8" r="2" fill="#fff"/></svg>
<div class="t" style="left:123px;top:1170.81px;font-size:14.98px;line-height:40px;color:#000;font-weight:400;font-family:'Liberation Sans', sans-serif;"><span style="font-size:14px">管理</span></div>
<svg class="r" style="left:87.5px;top:1209px;" width="8" height="10" viewBox="0 0 8 10"><path d="M1.5 1 L5.5 5 L1.5 9" stroke="#707070" stroke-width="1.5" fill="none"/></svg>
<svg class="r" style="left:103px;top:1205px;" width="16" height="16" viewBox="0 0 16 16"><path d="M7.5 1 L14.5 5 L7.5 9 L0.5 5 Z" fill="#3d5fa5"/><path d="M0.5 8 L7.5 12 L14.5 8" stroke="#4a6cb5" stroke-width="1.4" fill="none"/><path d="M0.5 11 L7.5 15 L14.5 11" stroke="#5a7cc5" stroke-width="1.4" fill="none"/></svg>
<div class="t" style="left:123px;top:1193.81px;font-size:14.98px;line-height:40px;color:#000;font-weight:400;font-family:'Liberation Sans', sans-serif;"><span style="font-size:14px">逻辑备份</span><span style="font-size:14.98px">&amp;</span><span style="font-size:14px">还原</span></div>
<svg class="r" style="left:87.5px;top:1232px;" width="8" height="10" viewBox="0 0 8 10"><path d="M1.5 1 L5.5 5 L1.5 9" stroke="#707070" stroke-width="1.5" fill="none"/></svg>
<svg class="r" style="left:103px;top:1228px;" width="16" height="16" viewBox="0 0 16 16"><circle cx="8" cy="8" r="7.5" fill="#e8a010"/><rect x="7" y="6.5" width="2" height="6" fill="#fff"/><rect x="7" y="3.5" width="2" height="2" fill="#fff"/></svg>
<div class="t" style="left:123px;top:1216.81px;font-size:14.98px;line-height:40px;color:#000;font-weight:400;font-family:'Liberation Sans', sans-serif;"><span style="font-size:14px">系统信息</span></div>
<div class="r" style="left:619px;top:343px;width:1px;height:1138px;background:#d0d0d0;"></div>
<div class="r" style="left:60px;top:1481px;width:560px;height:10px;background:#f0f0f0;"></div>
<div class="r" style="left:620px;top:343px;width:5px;height:1148px;background:#f0f0f0;"></div>
<div class="r" style="left:624px;top:343px;width:1px;height:1138px;background:#d4d4d4;"></div>
<div class="r" style="left:625px;top:343px;width:1130px;height:560px;background:#fff;"></div>
<div class="r" style="left:625px;top:343px;width:1130px;height:28px;background:#f2f2f2;border-top:1px solid #d2d2d2;"></div>
<div class="r" style="left:625px;top:370px;width:1130px;height:1px;background:#d0d0d0;"></div>
<div class="r" style="left:734px;top:343px;width:181px;height:29px;background:#fafafa;border:1px solid #d8d8d8;border-bottom:none;"></div>
<svg class="r" style="left:630px;top:350px;" width="18" height="17" viewBox="0 0 18 17"><ellipse cx="7" cy="3.5" rx="6" ry="2.5" fill="#eee" stroke="#555"/><path d="M1 3.5 v9 a6 2.5 0 0 0 12 0 v-9 M1 7 a6 2.5 0 0 0 12 0 M1 10 a6 2.5 0 0 0 12 0" stroke="#555" fill="none"/><rect x="9" y="8" width="7" height="8" fill="#3cb04a"/><path d="M10.5 12 l1.5 1.5 l3 -3.5" stroke="#fff" stroke-width="1.2" fill="none"/></svg>
<div class="t" style="left:649px;top:340.31px;font-size:14.98px;line-height:40px;color:#000;font-weight:400;font-family:'Liberation Sans', sans-serif;"><span style="font-size:14.98px">kingbase</span></div>
<svg class="r" style="left:739px;top:350px;" width="17" height="17" viewBox="0 0 17 17"><rect x="1" y="1" width="12" height="13" fill="#fff" stroke="#4466aa" stroke-width="1.2"/><path d="M3 4 h6" stroke="#3cb04a" stroke-width="1.5"/><circle cx="12" cy="12" r="4" fill="#fff" stroke="#4466aa" stroke-width="1.2"/><path d="M12 10 v2 h2" stroke="#4466aa"/></svg>
<div class="t" style="left:758px;top:340.31px;font-size:14.98px;line-height:40px;color:#000;font-weight:400;font-family:'Liberation Sans', sans-serif;"><span style="font-size:14.98px">*&lt;kingbase&gt; Script</span></div>
<svg class="r" style="left:895px;top:352px;" width="12" height="12" viewBox="0 0 12 12"><path d="M1.5 1.5 L10.5 10.5 M10.5 1.5 L1.5 10.5" stroke="#777" stroke-width="1.2"/></svg>
<div class="r" style="left:625px;top:371px;width:1130px;height:33px;background:#efefef;"></div>
<div class="t" style="left:655px;top:370.15px;font-size:14.00px;line-height:40px;color:#000;font-weight:400;font-family:'Liberation Sans', sans-serif;">执行计划</div>
<div class="t" style="left:749px;top:370.15px;font-size:14.00px;line-height:40px;color:#000;font-weight:400;font-family:'Liberation Sans', sans-serif;">性能报告</div>
<div class="t" style="left:842px;top:370.15px;font-size:14.00px;line-height:40px;color:#000;font-weight:400;font-family:'Liberation Sans', sans-serif;">执行日志</div>
<div class="t" style="left:934px;top:370.15px;font-size:14.00px;line-height:40px;color:#000;font-weight:400;font-family:'Liberation Sans', sans-serif;">输出</div>
<div class="t" style="left:999px;top:370.15px;font-size:14.00px;line-height:40px;color:#000;font-weight:400;font-family:'Liberation Sans', sans-serif;">执行</div>
<svg class="r" style="left:632px;top:376px;" width="20" height="20" viewBox="0 0 20 20"><path d="M0 0.5 l2 1 l2 -1 l2 1 l2 -1 l2 1 l2 -1 l2 1 l2 -1 v17 l-2 -1 l-2 1 l-2 -1 l-2 1 l-2 -1 l-2 1 l-2 -1 l-2 1 z" fill="#7a7a8c"/><path d="M3 6 h11 M3 10.5 h11" stroke="#fff" stroke-width="1.8"/><circle cx="14" cy="14.5" r="4" fill="#3a90f0" stroke="#fff" stroke-width="0.8"/><path d="M13 13 l2 2.5" stroke="#fff" stroke-width="0.9"/></svg>
<svg class="r" style="left:726px;top:377px;" width="20" height="20" viewBox="0 0 20 20"><rect x="0" y="1" width="18" height="17" fill="#5aa8f0"/><rect x="0" y="1" width="18" height="3" fill="#2a60c0"/><path d="M2 12 L6 9 L10 12 L16 8" stroke="#fff" stroke-width="1.6" fill="none"/></svg>
<svg class="r" style="left:818px;top:377px;" width="20" height="20" viewBox="0 0 20 20"><rect x="1" y="2" width="15" height="16" fill="#c4a040"/><rect x="1" y="2" width="15" height="3" fill="#8a6a20"/><circle cx="14" cy="15" r="4" fill="#4a80d0" stroke="#fff"/></svg>
<svg class="r" style="left:911px;top:377px;" width="20" height="17" viewBox="0 0 20 17"><path d="M4 0 h10 v16 h-14 v-12 z" fill="#d4bc58"/><path d="M0 4 h4 v-4 z" fill="#efe3b0"/><path d="M6 10.5 h10" stroke="#3a3520" stroke-width="1.8"/><path d="M14 7 L18 10.5 L14 14 Z" fill="#3a3520"/></svg>
<svg class="r" style="left:980px;top:377px;" width="12" height="16" viewBox="0 0 12 16"><path d="M0.5 0.5 L10.5 8 L0.5 15.5 Z" fill="#2a88e0"/></svg>
<svg class="r" style="left:1041px;top:377px;" width="18" height="18" viewBox="0 0 18 18"><rect x="1" y="0.5" width="16" height="15.5" fill="#8ec060"/><rect x="1" y="0.5" width="16" height="2.6" fill="#3a7a1a"/><path d="M6.5 6 L3.5 9 L6.5 12" stroke="#fff" stroke-width="1.6" fill="none"/><path d="M13 9 v8 M9 13 h8" stroke="#fff" stroke-width="2.6"/><path d="M13 9.5 v7 M9.5 13 h7" stroke="#5a9a3a" stroke-width="1.3"/></svg>
<svg class="r" style="left:1069px;top:377px;" width="18" height="17" viewBox="0 0 18 17"><rect x="1" y="0.5" width="16" height="15.5" fill="#70b4f0"/><rect x="1" y="0.5" width="16" height="2.6" fill="#3a5aa8"/><path d="M6.5 6.5 L4 9.5 L6.5 12.5 M11.5 6.5 L14 9.5 L11.5 12.5" stroke="#fff" stroke-width="1.6" fill="none"/></svg>
<svg class="r" style="left:1097px;top:377px;" width="18" height="17" viewBox="0 0 18 17"><path d="M2 0.5 h11 l2 2 v8 h-13z" fill="#8aa8c8"/><path d="M4 4 h7 M4 7 h5" stroke="#fff" stroke-width="1.2"/><rect x="0" y="11.5" width="16" height="2.5" fill="#7a7a9a"/><rect x="1.5" y="14.5" width="13" height="1.6" fill="#8aa8c8"/></svg>
<svg class="r" style="left:1125px;top:377px;" width="18" height="17" viewBox="0 0 18 17"><path d="M4 0.5 h10 v15.5 h-13 v-12 z" fill="#7a7890"/><path d="M1 3.5 h3 v-3 z" fill="#c8c8d8"/><path d="M4 13 L13 4" stroke="#3a98f0" stroke-width="2.4"/><path d="M3 14 l1.2 -2.5 l1.3 1.3 z" fill="#fff"/></svg>
<div class="r" style="left:625px;top:404px;width:1130px;height:495px;background:#fff;"></div>
<div class="r" style="left:625px;top:403px;width:11px;height:496px;background:#f7f7f7;"></div>
<div class="r" style="left:649px;top:403px;width:20px;height:76px;background:#e6e6ef;"></div>
<div class="r" style="left:649px;top:498px;width:20px;height:115px;background:#e6e6ef;"></div>
<div class="r" style="left:678px;top:403px;width:1px;height:496px;background:#f0f0f0;"></div>
<div class="r" style="left:681px;top:594px;width:1074px;height:19px;background:#e8f2fe;"></div>
<div class="t" style="left:658px;top:395.80px;font-size:15.00px;line-height:40px;color:#808080;font-weight:400;font-family:'Liberation Mono', monospace;letter-spacing:1px;">1</div>
<div class="t" style="left:658px;top:414.80px;font-size:15.00px;line-height:40px;color:#808080;font-weight:400;font-family:'Liberation Mono', monospace;letter-spacing:1px;">2</div>
<div class="t" style="left:658px;top:433.80px;font-size:15.00px;line-height:40px;color:#808080;font-weight:400;font-family:'Liberation Mono', monospace;letter-spacing:1px;">3</div>
<div class="t" style="left:658px;top:452.80px;font-size:15.00px;line-height:40px;color:#808080;font-weight:400;font-family:'Liberation Mono', monospace;letter-spacing:1px;">4</div>
<div class="t" style="left:658px;top:471.80px;font-size:15.00px;line-height:40px;color:#808080;font-weight:400;font-family:'Liberation Mono', monospace;letter-spacing:1px;">5</div>
<div class="t" style="left:658px;top:490.80px;font-size:15.00px;line-height:40px;color:#808080;font-weight:400;font-family:'Liberation Mono', monospace;letter-spacing:1px;">6</div>
<div class="t" style="left:658px;top:509.80px;font-size:15.00px;line-height:40px;color:#808080;font-weight:400;font-family:'Liberation Mono', monospace;letter-spacing:1px;">7</div>
<div class="t" style="left:658px;top:528.80px;font-size:15.00px;line-height:40px;color:#808080;font-weight:400;font-family:'Liberation Mono', monospace;letter-spacing:1px;">8</div>
<div class="t" style="left:658px;top:547.80px;font-size:15.00px;line-height:40px;color:#808080;font-weight:400;font-family:'Liberation Mono', monospace;letter-spacing:1px;">9</div>
<div class="t" style="left:648px;top:566.80px;font-size:15.00px;line-height:40px;color:#808080;font-weight:400;font-family:'Liberation Mono', monospace;letter-spacing:1px;">10</div>
<div class="t" style="left:648px;top:585.80px;font-size:15.00px;line-height:40px;color:#808080;font-weight:400;font-family:'Liberation Mono', monospace;letter-spacing:1px;">11</div>
<svg class="r" style="left:669px;top:408px;" width="10" height="10" viewBox="0 0 10 10"><circle cx="4.5" cy="4.5" r="4" fill="#dde3ea" stroke="#8a9aac" stroke-width="1"/><path d="M2 4.5 h5" stroke="#556" stroke-width="1.2"/></svg>
<div class="t" style="left:681px;top:395.80px;font-size:15.00px;line-height:40px;color:#800000;font-weight:700;font-family:'Liberation Mono', monospace;letter-spacing:1px;">CREATE</div>
<div class="t" style="left:741px;top:395.80px;font-size:15.00px;line-height:40px;color:#000;font-weight:400;font-family:'Liberation Mono', monospace;letter-spacing:1px;"> </div>
<div class="t" style="left:751px;top:395.80px;font-size:15.00px;line-height:40px;color:#800000;font-weight:700;font-family:'Liberation Mono', monospace;letter-spacing:1px;">TABLE</div>
<div class="t" style="left:801px;top:395.80px;font-size:15.00px;line-height:40px;color:#000;font-weight:400;font-family:'Liberation Mono', monospace;letter-spacing:1px;"> </div>
<div class="t" style="left:811px;top:395.80px;font-size:15.00px;line-height:40px;color:#1a1aa6;font-weight:400;font-family:'Liberation Mono', monospace;letter-spacing:1px;">&quot;Xml_Grammar_Auto2&quot;</div>
<div class="t" style="left:1001px;top:395.80px;font-size:15.00px;line-height:40px;color:#000;font-weight:400;font-family:'Liberation Mono', monospace;letter-spacing:1px;"> (</div>
<div class="t" style="left:681px;top:414.80px;font-size:15.00px;line-height:40px;color:#000;font-weight:400;font-family:'Liberation Mono', monospace;letter-spacing:1px;">    id </div>
<div class="t" style="left:751px;top:414.80px;font-size:15.00px;line-height:40px;color:#000080;font-weight:700;font-family:'Liberation Mono', monospace;letter-spacing:1px;">INT</div>
<div class="t" style="left:781px;top:414.80px;font-size:15.00px;line-height:40px;color:#000;font-weight:400;font-family:'Liberation Mono', monospace;letter-spacing:1px;">,</div>
<div class="t" style="left:681px;top:433.80px;font-size:15.00px;line-height:40px;color:#000;font-weight:400;font-family:'Liberation Mono', monospace;letter-spacing:1px;">    name2 </div>
<div class="t" style="left:781px;top:433.80px;font-size:15.00px;line-height:40px;color:#000080;font-weight:700;font-family:'Liberation Mono', monospace;letter-spacing:1px;">VARCHAR</div>
<div class="t" style="left:851px;top:433.80px;font-size:15.00px;line-height:40px;color:#000;font-weight:400;font-family:'Liberation Mono', monospace;letter-spacing:1px;">(</div>
<div class="t" style="left:861px;top:433.80px;font-size:15.00px;line-height:40px;color:#2020e0;font-weight:400;font-family:'Liberation Mono', monospace;letter-spacing:1px;">50</div>
<div class="t" style="left:881px;top:433.80px;font-size:15.00px;line-height:40px;color:#000;font-weight:400;font-family:'Liberation Mono', monospace;letter-spacing:1px;">)</div>
<div class="t" style="left:681px;top:452.80px;font-size:15.00px;line-height:40px;color:#000;font-weight:400;font-family:'Liberation Mono', monospace;letter-spacing:1px;">)</div>
<div class="t" style="left:691px;top:452.80px;font-size:15.00px;line-height:40px;color:#ff0000;font-weight:400;font-family:'Liberation Mono', monospace;letter-spacing:1px;font-style:italic;">;</div>
<div class="t" style="left:681px;top:490.80px;font-size:15.00px;line-height:40px;color:#800000;font-weight:700;font-family:'Liberation Mono', monospace;letter-spacing:1px;">SELECT</div>
<div class="t" style="left:681px;top:509.80px;font-size:15.00px;line-height:40px;color:#000;font-weight:400;font-family:'Liberation Mono', monospace;letter-spacing:1px;">    id </div>
<div class="t" style="left:751px;top:509.80px;font-size:15.00px;line-height:40px;color:#800000;font-weight:700;font-family:'Liberation Mono', monospace;letter-spacing:1px;">AS</div>
<div class="t" style="left:771px;top:509.80px;font-size:15.00px;line-height:40px;color:#000;font-weight:400;font-family:'Liberation Mono', monospace;letter-spacing:1px;"> </div>
<div class="t" style="left:781px;top:509.80px;font-size:15.00px;line-height:40px;color:#2a2ab0;font-weight:400;font-family:'Liberation Mono', monospace;letter-spacing:1px;">[@id]</div>
<div class="t" style="left:831px;top:509.80px;font-size:15.00px;line-height:40px;color:#000;font-weight:400;font-family:'Liberation Mono', monospace;letter-spacing:1px;">, </div>
<div class="t" style="left:851px;top:509.80px;font-size:15.00px;line-height:40px;color:#808080;font-weight:400;font-family:'Liberation Mono', monospace;letter-spacing:1px;">-- </div>
<div class="t" style="left:881px;top:508.84px;font-size:12.00px;line-height:40px;color:#808080;font-weight:400;font-family:'Liberation Sans', sans-serif;">使用@符号表示属性</div>
<div class="t" style="left:681px;top:528.80px;font-size:15.00px;line-height:40px;color:#000;font-weight:400;font-family:'Liberation Mono', monospace;letter-spacing:1px;">    name2 </div>
<div class="t" style="left:781px;top:528.80px;font-size:15.00px;line-height:40px;color:#800000;font-weight:700;font-family:'Liberation Mono', monospace;letter-spacing:1px;">AS</div>
<div class="t" style="left:801px;top:528.80px;font-size:15.00px;line-height:40px;color:#000;font-weight:400;font-family:'Liberation Mono', monospace;letter-spacing:1px;"> kes</div>
<div class="t" style="left:681px;top:547.80px;font-size:15.00px;line-height:40px;color:#800000;font-weight:700;font-family:'Liberation Mono', monospace;letter-spacing:1px;">FROM</div>
<div class="t" style="left:681px;top:566.80px;font-size:15.00px;line-height:40px;color:#000;font-weight:400;font-family:'Liberation Mono', monospace;letter-spacing:1px;">    public.xml_grammar_auto2</div>
<div class="t" style="left:681px;top:585.80px;font-size:15.00px;line-height:40px;color:#800000;font-weight:700;font-family:'Liberation Mono', monospace;letter-spacing:1px;">FOR</div>
<div class="t" style="left:711px;top:585.80px;font-size:15.00px;line-height:40px;color:#000;font-weight:400;font-family:'Liberation Mono', monospace;letter-spacing:1px;"> </div>
<div class="t" style="left:721px;top:585.80px;font-size:15.00px;line-height:40px;color:#000080;font-weight:700;font-family:'Liberation Mono', monospace;letter-spacing:1px;">XML</div>
<div class="t" style="left:751px;top:585.80px;font-size:15.00px;line-height:40px;color:#000;font-weight:400;font-family:'Liberation Mono', monospace;letter-spacing:1px;"> </div>
<div class="t" style="left:761px;top:585.80px;font-size:15.00px;line-height:40px;color:#000080;font-weight:700;font-family:'Liberation Mono', monospace;letter-spacing:1px;">PATH</div>
<div class="t" style="left:801px;top:585.80px;font-size:15.00px;line-height:40px;color:#000;font-weight:400;font-family:'Liberation Mono', monospace;letter-spacing:1px;"> (</div>
<div class="t" style="left:821px;top:585.80px;font-size:15.00px;line-height:40px;color:#008000;font-weight:400;font-family:'Liberation Mono', monospace;letter-spacing:1px;">&#x27;row&#x27;</div>
<div class="t" style="left:871px;top:585.80px;font-size:15.00px;line-height:40px;color:#000;font-weight:400;font-family:'Liberation Mono', monospace;letter-spacing:1px;">), </div>
<div class="t" style="left:901px;top:585.80px;font-size:15.00px;line-height:40px;color:#800000;font-weight:700;font-family:'Liberation Mono', monospace;letter-spacing:1px;">ROOT</div>
<div class="t" style="left:941px;top:585.80px;font-size:15.00px;line-height:40px;color:#000;font-weight:400;font-family:'Liberation Mono', monospace;letter-spacing:1px;">(</div>
<div class="t" style="left:951px;top:585.80px;font-size:15.00px;line-height:40px;color:#008000;font-weight:400;font-family:'Liberation Mono', monospace;letter-spacing:1px;">&#x27;data&#x27;</div>
<div class="t" style="left:1011px;top:585.80px;font-size:15.00px;line-height:40px;color:#000;font-weight:400;font-family:'Liberation Mono', monospace;letter-spacing:1px;">)</div>
<div class="t" style="left:1021px;top:585.80px;font-size:15.00px;line-height:40px;color:#ff0000;font-weight:400;font-family:'Liberation Mono', monospace;letter-spacing:1px;font-style:italic;">;</div>
<div class="r" style="left:771px;top:596px;width:2px;height:17px;background:#000;"></div>
<div class="r" style="left:625px;top:899px;width:1130px;height:19px;background:#efefef;"></div>
<div class="r" style="left:625px;top:899px;width:54px;height:19px;background:#f7f7f7;"></div>
<svg class="r" style="left:684px;top:903px;" width="8" height="11" viewBox="0 0 8 11"><path d="M7 0 L0 5.5 L7 11 Z" fill="#a0a0a0"/></svg>
<div class="r" style="left:625px;top:918px;width:1130px;height:11px;background:#f0f0f0;"></div>
<div class="r" style="left:625px;top:925px;width:1130px;height:1px;background:#9fb6d2;"></div>
<div class="r" style="left:625px;top:929px;width:1130px;height:552px;background:#f0f0f0;"></div>
<div class="r" style="left:625px;top:957px;width:1130px;height:1px;background:#bdbdbd;"></div>
<svg class="r" style="left:625px;top:932px;" width="92" height="26" viewBox="0 0 92 26"><path d="M0.5 26 V1.5 H86 Q90 1.5 90.5 6 V26" fill="#f5f5f5" stroke="#a8a8a8" stroke-width="1"/></svg>
<div class="r" style="left:715px;top:957px;width:1040px;height:1px;background:#bdbdbd;"></div>
<svg class="r" style="left:631px;top:938px;" width="12" height="14" viewBox="0 0 12 14"><rect x="0" y="0" width="11" height="13" fill="#1a8ad8"/><path d="M3.5 0 v13 M7 0 v13 M0 4 h11 M0 7 h11 M0 10 h11" stroke="#fff" stroke-width="0.9"/></svg>
<div class="t" style="left:649px;top:925.81px;font-size:14.98px;line-height:40px;color:#000;font-weight:400;font-family:'Liberation Sans', sans-serif;"><span style="font-size:14px">结果</span><span style="font-size:14.98px"> 1</span></div>
<svg class="r" style="left:697px;top:940px;" width="10" height="10" viewBox="0 0 10 10"><path d="M1 1 L9 9 M9 1 L1 9" stroke="#666" stroke-width="1.2"/></svg>
<svg class="r" style="left:720px;top:939px;" width="14" height="15" viewBox="0 0 14 15"><path d="M1 1 h8 l3 3 v10 h-11z" fill="#fff" stroke="#1a78d0" stroke-width="1.3"/><rect x="3" y="6" width="3" height="2" fill="#1a78d0"/><rect x="5" y="10" width="5" height="2" fill="#1a78d0"/></svg>
<div class="t" style="left:739px;top:925.81px;font-size:14.98px;line-height:40px;color:#000;font-weight:400;font-family:'Liberation Sans', sans-serif;"><span style="font-size:14px">执行计划</span><span style="font-size:14.98px"> - 1</span></div>
<div class="r" style="left:842px;top:933px;width:1px;height:24px;background:#bdbdbd;"></div>
<div class="r" style="left:628px;top:961px;width:1072px;height:25px;background:#fff;border:1px solid #b4b4b4;"></div>
<svg class="r" style="left:632px;top:963px;" width="16" height="17" viewBox="0 0 16 17"><path d="M1 2 h8 M5 2 v13 M3 15 h4" stroke="#3a5aa8" stroke-width="1.2"/><path d="M13 9 l-3 2 l3 2" stroke="#3a8ad8" stroke-width="1.2" fill="none"/></svg>
<div class="t" style="left:648px;top:955.05px;font-size:14.28px;line-height:40px;color:#1a8a1a;font-weight:400;font-family:'Liberation Sans', sans-serif;width:300px;overflow:hidden;"><span style="font-size:14.28px">SELECT id AS [@id], name2 AS kes FROM pul</span></div>
<div class="r" style="left:949px;top:964px;width:1px;height:19px;background:#aaa;"></div>
<svg class="r" style="left:957px;top:965px;" width="14" height="15" viewBox="0 0 14 15"><path d="M1 1 L5 5 M13 1 L9 5 M1 14 L5 10 M13 14 L9 10" stroke="#444" stroke-width="1.3"/><path d="M1 1 h3 M1 1 v3 M13 1 h-3 M13 1 v3 M1 14 h3 M1 14 v-3 M13 14 h-3 M13 14 v-3" stroke="#444" stroke-width="1.3"/></svg>
<div class="t" style="left:978px;top:954.81px;font-size:14.98px;line-height:40px;color:#a8a8a8;font-weight:400;font-family:'Liberation Sans', sans-serif;font-style:italic;"><span style="font-size:14px">输入一个</span><span style="font-size:14.98px"> SQL </span><span style="font-size:14px">表达式来过滤结果</span><span style="font-size:14.98px"> (</span><span style="font-size:14px">使用</span><span style="font-size:14.98px"> Ctrl+Space)</span></div>
<svg class="r" style="left:1656px;top:966px;" width="12" height="16" viewBox="0 0 12 16"><path d="M1 1 L11 8 L1 15 Z" fill="#7a7a7a"/></svg>
<div class="r" style="left:1679px;top:965px;width:1px;height:18px;background:#888;"></div>
<svg class="r" style="left:1684px;top:971px;" width="12" height="7" viewBox="0 0 12 7"><path d="M0 0 h11 l-5.5 6z" fill="#333"/></svg>
<svg class="r" style="left:1707px;top:965px;" width="18" height="16" viewBox="0 0 18 16"><path d="M2 11 L10 2 L16 7 L9 14 H5 Z" fill="#9a9a9a"/><path d="M11 15 h5" stroke="#888"/></svg>
<svg class="r" style="left:1732px;top:965px;" width="20" height="16" viewBox="0 0 20 16"><path d="M1 1 h12 l-4.5 6 v7 l-3-2 v-5z" fill="none" stroke="#888" stroke-width="1.2"/><rect x="12" y="9" width="5" height="5" fill="none" stroke="#888"/></svg>
<div class="r" style="left:625px;top:989px;width:1130px;height:38px;background:#f0f0f0;border:1px solid #c4c4c4;border-right:none;"></div>
<svg class="r" style="left:634px;top:1000px;" width="15" height="15" viewBox="0 0 15 15"><circle cx="7.5" cy="7.5" r="6.5" fill="none" stroke="#999" stroke-width="1.2"/><path d="M4.5 7.5 l2 2 l4 -4" stroke="#999" stroke-width="1.2" fill="none"/></svg>
<div class="t" style="left:653px;top:988.65px;font-size:14.00px;line-height:40px;color:#a0a0a0;font-weight:400;font-family:'Liberation Sans', sans-serif;">保存</div>
<svg class="r" style="left:694px;top:1002px;" width="13" height="13" viewBox="0 0 13 13"><rect x="0.5" y="0.5" width="11" height="11" fill="none" stroke="#999"/><path d="M3 3 L9 9 M9 3 L3 9" stroke="#999"/></svg>
<div class="t" style="left:711px;top:988.65px;font-size:14.00px;line-height:40px;color:#a0a0a0;font-weight:400;font-family:'Liberation Sans', sans-serif;">取消</div>
<svg class="r" style="left:752px;top:1001px;" width="15" height="14" viewBox="0 0 15 14"><path d="M3 1 h11 v11 h-11z" fill="#9a9a9a"/><path d="M0 13 h12" stroke="#9a9a9a" stroke-width="2"/><circle cx="8" cy="8" r="2.5" fill="#eee"/></svg>
<div class="t" style="left:770px;top:988.65px;font-size:14.00px;line-height:40px;color:#a0a0a0;font-weight:400;font-family:'Liberation Sans', sans-serif;">脚本</div>
<div class="r" style="left:809px;top:997px;width:1.3px;height:22px;background:#666;"></div>
<svg class="r" style="left:819.5px;top:1001px;" width="16" height="15" viewBox="0 0 16 15"><path d="M0 1.5 h14 M0 6.5 h9 M0 11.5 h6" stroke="#1a7ad0" stroke-width="2"/><path d="M8 14 L14.5 7.5" stroke="#1a7ad0" stroke-width="2.2"/></svg>
<svg class="r" style="left:843.5px;top:1001px;" width="16" height="15" viewBox="0 0 16 15"><path d="M0 1.5 h14 M0 6.5 h5 M0 11.5 h5" stroke="#9a9a9a" stroke-width="1.8"/><path d="M11 5 v9 M6.5 9.5 h9" stroke="#9a9a9a" stroke-width="2"/></svg>
<svg class="r" style="left:868px;top:1001px;" width="16" height="15" viewBox="0 0 16 15"><path d="M0 1.5 h14 M0 6.5 h3 M0 11.5 h3" stroke="#9a9a9a" stroke-width="1.8"/><path d="M7 5 v9 M3 9.5 h8" stroke="#9a9a9a" stroke-width="2"/><path d="M12 4 l3 3 M15 4 l-3 3" stroke="#9a9a9a" stroke-width="0.8"/></svg>
<svg class="r" style="left:892px;top:1001px;" width="16" height="15" viewBox="0 0 16 15"><path d="M0 1.5 h14 M0 6.5 h2 M0 11.5 h2" stroke="#9a9a9a" stroke-width="1.8"/><path d="M5 5 Q3.5 9.5 5 14 M13 5 Q14.5 9.5 13 14" stroke="#9a9a9a" stroke-width="1" fill="none"/><path d="M9 6.5 v6 M6 9.5 h6" stroke="#9a9a9a" stroke-width="1.2"/></svg>
<svg class="r" style="left:916px;top:1001px;" width="16" height="15" viewBox="0 0 16 15"><path d="M0 1.5 h14 M0 6.5 h5 M0 11.5 h5 M7 10 h8" stroke="#9a9a9a" stroke-width="1.8"/></svg>
<div class="r" style="left:940px;top:1001px;width:1.5px;height:2px;background:#b8b0a0;"></div>
<div class="r" style="left:940px;top:1005px;width:1.5px;height:2px;background:#b8b0a0;"></div>
<div class="r" style="left:940px;top:1009px;width:1.5px;height:2px;background:#b8b0a0;"></div>
<div class="r" style="left:940px;top:1013px;width:1.5px;height:2px;background:#b8b0a0;"></div>
<svg class="r" style="left:951px;top:1001px;" width="13" height="14" viewBox="0 0 13 14"><path d="M6 2.5 v7" stroke="#2a88e0" stroke-width="2"/><path d="M2.5 5.5 L6 1 L9.5 5.5 Z" fill="#2a88e0"/><path d="M0.7 10 v2.8 h10.6 v-2.8" stroke="#2a5ab0" stroke-width="1.4" fill="none"/></svg>
<div class="r" style="left:973px;top:1001px;width:1.5px;height:2px;background:#b8b0a0;"></div>
<div class="r" style="left:973px;top:1005px;width:1.5px;height:2px;background:#b8b0a0;"></div>
<div class="r" style="left:973px;top:1009px;width:1.5px;height:2px;background:#b8b0a0;"></div>
<div class="r" style="left:973px;top:1013px;width:1.5px;height:2px;background:#b8b0a0;"></div>
<svg class="r" style="left:981px;top:1002px;" width="15" height="13" viewBox="0 0 15 13"><rect x="0.8" y="0.8" width="13.4" height="11.4" fill="none" stroke="#2a5ab0" stroke-width="1.3"/><path d="M0.8 4.5 h13 M0.8 8.3 h13 M5.2 4.5 v7.5 M9.7 4.5 v7.5" stroke="#2a5ab0" stroke-width="0.9"/></svg>
<div class="t" style="left:999px;top:988.65px;font-size:14.00px;line-height:40px;color:#000;font-weight:400;font-family:'Liberation Sans', sans-serif;">网格</div>
<svg class="r" style="left:1041px;top:1000px;" width="16" height="16" viewBox="0 0 16 16"><path d="M1 2 h8 M5 2 v12 M3 14 h4" stroke="#3a5aa8" stroke-width="1.2"/><path d="M13 8 l-3 2 l3 2" stroke="#3a8ad8" stroke-width="1.2" fill="none"/></svg>
<div class="t" style="left:1059px;top:988.65px;font-size:14.00px;line-height:40px;color:#000;font-weight:400;font-family:'Liberation Sans', sans-serif;">文本</div>
<svg class="r" style="left:1102px;top:1000px;" width="16" height="16" viewBox="0 0 16 16"><path d="M1 1 h7 l3 3 v11 h-10z" fill="none" stroke="#3a6ab8" stroke-width="1.2"/><circle cx="10" cy="12" r="3.5" fill="#3a8ad8"/></svg>
<div class="t" style="left:1120px;top:988.65px;font-size:14.00px;line-height:40px;color:#000;font-weight:400;font-family:'Liberation Sans', sans-serif;">记录</div>
<div class="r" style="left:1163px;top:1000px;width:1.5px;height:2px;background:#b8b0a0;"></div>
<div class="r" style="left:1163px;top:1004px;width:1.5px;height:2px;background:#b8b0a0;"></div>
<div class="r" style="left:1163px;top:1008px;width:1.5px;height:2px;background:#b8b0a0;"></div>
<div class="r" style="left:1163px;top:1012px;width:1.5px;height:2px;background:#b8b0a0;"></div>
<svg class="r" style="left:1173px;top:1001px;" width="16" height="14" viewBox="0 0 16 14"><path d="M2 9 v-5 h10 M10 1.5 L12.5 4 L10 6.5 M14 5 v5 h-10 M6 12.5 L3.5 10 L6 7.5" stroke="#2a6ad0" stroke-width="1.5" fill="none"/></svg>
<div class="t" style="left:1192px;top:988.65px;font-size:14.00px;line-height:40px;color:#000;font-weight:400;font-family:'Liberation Sans', sans-serif;">面板</div>
<svg class="r" style="left:1236px;top:1005px;" width="10" height="6" viewBox="0 0 10 6"><path d="M0 0 h9 l-4.5 5z" fill="#222"/></svg>
<div class="r" style="left:625px;top:1026px;width:909px;height:430px;background:#fff;"></div>
<div class="r" style="left:625px;top:1026px;width:909px;height:31px;background:#efefef;"></div>
<div class="r" style="left:625px;top:1026px;width:909px;height:1px;background:#b0b0b0;"></div>
<div class="r" style="left:655px;top:1027px;width:77px;height:30px;background:#83bae8;"></div>
<div class="r" style="left:654px;top:1026px;width:1.6px;height:430px;background:#111;"></div>
<svg class="r" style="left:629px;top:1031px;" width="8" height="9" viewBox="0 0 8 9"><rect x="0" y="4" width="6.5" height="5" rx="0.5" fill="#f5b000"/><path d="M1.3 4.5 v-1.5 a2 2 0 0 1 4 0 v1.5" stroke="#f5b000" stroke-width="1.3" fill="none"/></svg>
<div class="t" style="left:661px;top:1021.73px;font-size:8.00px;line-height:40px;color:#1a80d0;font-weight:700;font-family:'Liberation Sans', sans-serif;letter-spacing:-0.2px;">ABC</div>
<div class="t" style="left:680px;top:1023.65px;font-size:14.00px;line-height:40px;color:#000;font-weight:400;font-family:'Liberation Sans', sans-serif;">xml</div>
<svg class="r" style="left:711px;top:1033px;" width="20" height="16" viewBox="0 0 20 16"><path d="M1 1 h8 l-3 4 v8 l-2 -2 v-6z" fill="none" stroke="#4a9ad8" stroke-width="1.3"/><path d="M15 2 v12 M12.5 4.5 L15 2 L17.5 4.5 M12.5 11.5 L15 14 L17.5 11.5" stroke="#2a8ad8" stroke-width="1.5" fill="none"/></svg>
<div class="r" style="left:625px;top:1057px;width:29px;height:23px;background:#83bae8;"></div>
<div class="r" style="left:656px;top:1058px;width:75px;height:22px;background:#6aaae2;border:2px solid #111;"></div>
<div class="t" style="left:631px;top:1049.81px;font-size:14.98px;line-height:40px;color:#000;font-weight:700;font-family:'Liberation Sans', sans-serif;"><span style="font-size:14.98px">1</span></div>
<div class="t" style="left:661px;top:1049.65px;font-size:14.00px;line-height:40px;color:#f0f4fa;font-weight:400;font-family:'Liberation Sans', sans-serif;">[NULL]</div>
<div class="r" style="left:625px;top:1081px;width:29px;height:22px;background:#efefef;"></div>
<div class="r" style="left:625px;top:1080px;width:29px;height:1.3px;background:#111;"></div>
<div class="r" style="left:656px;top:1080px;width:878px;height:1px;background:#ececec;"></div>
<div class="r" style="left:625px;top:1104px;width:29px;height:22px;background:#efefef;"></div>
<div class="r" style="left:625px;top:1103px;width:29px;height:1.3px;background:#111;"></div>
<div class="r" style="left:656px;top:1103px;width:878px;height:1px;background:#ececec;"></div>
<div class="r" style="left:625px;top:1127px;width:29px;height:22px;background:#efefef;"></div>
<div class="r" style="left:625px;top:1126px;width:29px;height:1.3px;background:#111;"></div>
<div class="r" style="left:656px;top:1126px;width:878px;height:1px;background:#ececec;"></div>
<div class="r" style="left:625px;top:1150px;width:29px;height:22px;background:#efefef;"></div>
<div class="r" style="left:625px;top:1149px;width:29px;height:1.3px;background:#111;"></div>
<div class="r" style="left:656px;top:1149px;width:878px;height:1px;background:#ececec;"></div>
<div class="r" style="left:625px;top:1173px;width:29px;height:22px;background:#efefef;"></div>
<div class="r" style="left:625px;top:1172px;width:29px;height:1.3px;background:#111;"></div>
<div class="r" style="left:656px;top:1172px;width:878px;height:1px;background:#ececec;"></div>
<div class="r" style="left:625px;top:1196px;width:29px;height:22px;background:#efefef;"></div>
<div class="r" style="left:625px;top:1195px;width:29px;height:1.3px;background:#111;"></div>
<div class="r" style="left:656px;top:1195px;width:878px;height:1px;background:#ececec;"></div>
<div class="r" style="left:625px;top:1219px;width:29px;height:22px;background:#efefef;"></div>
<div class="r" style="left:625px;top:1218px;width:29px;height:1.3px;background:#111;"></div>
<div class="r" style="left:656px;top:1218px;width:878px;height:1px;background:#ececec;"></div>
<div class="r" style="left:625px;top:1242px;width:29px;height:22px;background:#efefef;"></div>
<div class="r" style="left:625px;top:1241px;width:29px;height:1.3px;background:#111;"></div>
<div class="r" style="left:656px;top:1241px;width:878px;height:1px;background:#ececec;"></div>
<div class="r" style="left:625px;top:1265px;width:29px;height:22px;background:#efefef;"></div>
<div class="r" style="left:625px;top:1264px;width:29px;height:1.3px;background:#111;"></div>
<div class="r" style="left:656px;top:1264px;width:878px;height:1px;background:#ececec;"></div>
<div class="r" style="left:625px;top:1288px;width:29px;height:22px;background:#efefef;"></div>
<div class="r" style="left:625px;top:1287px;width:29px;height:1.3px;background:#111;"></div>
<div class="r" style="left:656px;top:1287px;width:878px;height:1px;background:#ececec;"></div>
<div class="r" style="left:625px;top:1311px;width:29px;height:22px;background:#efefef;"></div>
<div class="r" style="left:625px;top:1310px;width:29px;height:1.3px;background:#111;"></div>
<div class="r" style="left:656px;top:1310px;width:878px;height:1px;background:#ececec;"></div>
<div class="r" style="left:625px;top:1334px;width:29px;height:22px;background:#efefef;"></div>
<div class="r" style="left:625px;top:1333px;width:29px;height:1.3px;background:#111;"></div>
<div class="r" style="left:656px;top:1333px;width:878px;height:1px;background:#ececec;"></div>
<div class="r" style="left:625px;top:1357px;width:29px;height:22px;background:#efefef;"></div>
<div class="r" style="left:625px;top:1356px;width:29px;height:1.3px;background:#111;"></div>
<div class="r" style="left:656px;top:1356px;width:878px;height:1px;background:#ececec;"></div>
<div class="r" style="left:625px;top:1380px;width:29px;height:22px;background:#efefef;"></div>
<div class="r" style="left:625px;top:1379px;width:29px;height:1.3px;background:#111;"></div>
<div class="r" style="left:656px;top:1379px;width:878px;height:1px;background:#ececec;"></div>
<div class="r" style="left:625px;top:1403px;width:29px;height:22px;background:#efefef;"></div>
<div class="r" style="left:625px;top:1402px;width:29px;height:1.3px;background:#111;"></div>
<div class="r" style="left:656px;top:1402px;width:878px;height:1px;background:#ececec;"></div>
<div class="r" style="left:625px;top:1426px;width:29px;height:22px;background:#efefef;"></div>
<div class="r" style="left:625px;top:1425px;width:29px;height:1.3px;background:#111;"></div>
<div class="r" style="left:656px;top:1425px;width:878px;height:1px;background:#ececec;"></div>
<div class="r" style="left:625px;top:1449px;width:29px;height:22px;background:#efefef;"></div>
<div class="r" style="left:625px;top:1448px;width:29px;height:1.3px;background:#111;"></div>
<div class="r" style="left:656px;top:1448px;width:878px;height:1px;background:#ececec;"></div>
<div class="r" style="left:731px;top:1057px;width:1px;height:399px;background:#e8e8e8;"></div>
<div class="r" style="left:1534px;top:1026px;width:221px;height:430px;background:#f0f0f0;"></div>
<div class="r" style="left:1539px;top:1051px;width:216px;height:386px;background:#fff;"></div>
<div class="r" style="left:1539px;top:1051px;width:12px;height:386px;background:#f7f7f7;"></div>
<div class="r" style="left:1571px;top:1051px;width:1px;height:386px;background:#ececec;"></div>
<svg class="r" style="left:1539px;top:1026px;" width="116" height="26" viewBox="0 0 116 26"><path d="M0.5 26 V1.5 H111 Q114.5 1.5 114.5 5 V25.5 H220" fill="#f5f5f5" stroke="#a8a8a8" stroke-width="1"/></svg>
<div class="r" style="left:1539px;top:1026px;width:216px;height:1px;background:#a8a8a8;"></div>
<svg class="r" style="left:1543px;top:1033px;" width="12" height="12" viewBox="0 0 12 12"><path d="M1.5 0 v12 M6 1 v10 M10.5 0 v12" stroke="#2a70c8" stroke-width="1.1"/><rect x="0.3" y="2.5" width="2.4" height="7" fill="#fff" stroke="#2a70c8" stroke-width="0.9"/><rect x="4.8" y="4" width="2.4" height="4" fill="#fff" stroke="#2a70c8" stroke-width="0.9"/><rect x="9.3" y="3" width="2.4" height="5" fill="#fff" stroke="#2a70c8" stroke-width="0.9"/></svg>
<div class="t" style="left:1558px;top:1021.15px;font-size:14.00px;line-height:40px;color:#000;font-weight:400;font-family:'Liberation Sans', sans-serif;">数值查看器</div>
<svg class="r" style="left:1636px;top:1034px;" width="11" height="11" viewBox="0 0 11 11"><path d="M1 1 L10 10 M10 1 L1 10" stroke="#666" stroke-width="1.2"/></svg>
<div class="t" style="left:1561px;top:1041.80px;font-size:15.00px;line-height:40px;color:#6a8aa8;font-weight:400;font-family:'Liberation Mono', monospace;">1</div>
<div class="r" style="left:1539px;top:1437px;width:216px;height:19px;background:#efefef;"></div>
<div class="r" style="left:1539px;top:1437px;width:32px;height:19px;background:#f7f7f7;"></div>
<svg class="r" style="left:1578px;top:1440px;" width="8" height="12" viewBox="0 0 8 12"><path d="M7 0 L0 6 L7 12 Z" fill="#a0a0a0"/></svg>
<div class="r" style="left:625px;top:1456px;width:1130px;height:25px;background:#f0f0f0;"></div>
<div class="r" style="left:630px;top:1461px;width:1.5px;height:2px;background:#b8b0a0;"></div>
<div class="r" style="left:630px;top:1465px;width:1.5px;height:2px;background:#b8b0a0;"></div>
<div class="r" style="left:630px;top:1469px;width:1.5px;height:2px;background:#b8b0a0;"></div>
<div class="r" style="left:630px;top:1473px;width:1.5px;height:2px;background:#b8b0a0;"></div>
<div class="r" style="left:884px;top:1461px;width:1.5px;height:2px;background:#b8b0a0;"></div>
<div class="r" style="left:884px;top:1465px;width:1.5px;height:2px;background:#b8b0a0;"></div>
<div class="r" style="left:884px;top:1469px;width:1.5px;height:2px;background:#b8b0a0;"></div>
<div class="r" style="left:884px;top:1473px;width:1.5px;height:2px;background:#b8b0a0;"></div>
<svg class="r" style="left:637px;top:1460px;" width="16" height="16" viewBox="0 0 16 16"><path d="M2 1 v14" stroke="#555" stroke-width="2"/><path d="M12 2 L5 8 L12 14" stroke="#555" stroke-width="1.8" fill="none"/></svg>
<svg class="r" style="left:661px;top:1460px;" width="12" height="16" viewBox="0 0 12 16"><path d="M9 2 L3 8 L9 14" stroke="#555" stroke-width="1.8" fill="none"/></svg>
<svg class="r" style="left:685px;top:1460px;" width="12" height="16" viewBox="0 0 12 16"><path d="M3 2 L9 8 L3 14" stroke="#555" stroke-width="1.8" fill="none"/></svg>
<svg class="r" style="left:706px;top:1460px;" width="16" height="16" viewBox="0 0 16 16"><path d="M14 1 v14" stroke="#555" stroke-width="2"/><path d="M3 2 L10 8 L3 14" stroke="#555" stroke-width="1.8" fill="none"/></svg>
<div class="r" style="left:727px;top:1459px;width:1.5px;height:19px;background:#555;"></div>
<svg class="r" style="left:736px;top:1461px;" width="16" height="15" viewBox="0 0 16 15"><path d="M2 7 v5 h6 M6 10 l2 2 l-2 2" stroke="#aaa" stroke-width="1.1" fill="none"/><path d="M9 1 h4 l2 2 v5 h-6z" fill="#ddd" stroke="#999"/></svg>
<svg class="r" style="left:759px;top:1460px;" width="16" height="16" viewBox="0 0 16 16"><path d="M1 4 V1 h3 M12 1 h3 v3 M15 12 v3 h-3 M4 15 h-3 v-3" stroke="#888" stroke-width="1.2" fill="none"/><path d="M5 4 h4 l2 2 v6 h-6z" fill="none" stroke="#888"/></svg>
<div class="r" style="left:783px;top:1456px;width:52px;height:25px;background:#fff;border-bottom:1px solid #888;"></div>
<div class="t" style="left:786px;top:1448.81px;font-size:14.98px;line-height:40px;color:#000;font-weight:400;font-family:'Liberation Sans', sans-serif;"><span style="font-size:14.98px">200</span></div>
<svg class="r" style="left:843px;top:1460px;" width="15" height="15" viewBox="0 0 15 15"><path d="M3 6 A5 5 0 0 1 12 4 M12 9 A5 5 0 0 1 3 11" stroke="#333" stroke-width="1.8" fill="none"/><path d="M10 1 L14 5 L9 6Z M5 14 L1 10 L6 9Z" fill="#333"/></svg>
<div class="t" style="left:866px;top:1448.81px;font-size:14.98px;line-height:40px;color:#000;font-weight:400;font-family:'Liberation Sans', sans-serif;"><span style="font-size:14.98px">1</span></div>
<svg class="r" style="left:1664px;top:1460px;" width="20" height="17" viewBox="0 0 20 17"><rect x="6" y="4" width="12" height="9" fill="#4ab8e8"/><path d="M3 1 h3 M4.5 1 v15 M3 16 h3" stroke="#1a88d8" stroke-width="1.2"/><rect x="1" y="5" width="3" height="7" fill="none" stroke="#1a88d8"/></svg>
<div class="t" style="left:1687px;top:1447.81px;font-size:14.98px;line-height:40px;color:#000;font-weight:400;font-family:'Liberation Sans', sans-serif;"><span style="font-size:14.98px">1 </span><span style="font-size:14px">行</span><span style="font-size:14.98px"> - 3ms</span></div>
<div class="r" style="left:1250px;top:918px;width:55px;height:15px;background:#f0f0f0;border:1px solid #9ab4d4;border-radius:2px;"></div>
<svg class="r" style="left:1260px;top:924px;" width="36" height="5" viewBox="0 0 36 5"><path d="M0 4 L6.5 0.5 L13 4Z M21 0 L34 0 L27.5 4Z" fill="#9ab4d4"/></svg>
<div class="r" style="left:620px;top:1481px;width:1135px;height:10px;background:#f0f0f0;"></div>
<div class="r" style="left:620px;top:1481px;width:1135px;height:1px;background:#c8c8c8;"></div>
<div class="t" style="left:1511px;top:1475.15px;font-size:14.00px;line-height:40px;color:#000;font-weight:400;font-family:'Liberation Sans', sans-serif;">可写</div>
<div class="t" style="left:1666px;top:1475.15px;font-size:14.00px;line-height:40px;color:#000;font-weight:400;font-family:'Liberation Sans', sans-serif;">智能插入</div>
<div class="r" style="left:1503px;top:1481px;width:1px;height:10px;background:#a0a0a0;"></div>
<div class="r" style="left:1657px;top:1481px;width:1px;height:10px;background:#a0a0a0;"></div>
<div class="r" style="left:248px;top:271px;width:302px;height:112px;background:#f9f9f9;border:1px solid #dcdcdc;box-shadow:1px 1px 2px rgba(0,0,0,0.08);"></div>
<div class="r" style="left:255px;top:275px;width:288px;height:24px;background:#ececec;border-radius:5px;"></div>
<svg class="r" style="left:258px;top:279px;" width="20" height="17" viewBox="0 0 20 17"><rect x="1" y="0" width="8" height="10" fill="#eef2fa" stroke="#6a7aaa" stroke-width="0.8"/><path d="M3 3 h4 M3 5 h4 M3 7 h3" stroke="#6a7aaa" stroke-width="0.7"/><path d="M6 15 L13 7 L17 5 L16 10 L9 16 Z" fill="#d9b060"/><path d="M3 16 L8 12 L9 16 Z" fill="#999"/></svg>
<div class="t" style="left:290px;top:267.65px;font-size:14.00px;line-height:40px;color:#000;font-weight:400;font-family:'Liberation Sans', sans-serif;">搜索文件</div>
<svg class="r" style="left:259px;top:303px;" width="17" height="16" viewBox="0 0 17 16"><ellipse cx="8" cy="3.5" rx="7" ry="3" fill="#1a88d8"/><path d="M1 3.5 v9 a7 3 0 0 0 14 0 v-9" fill="#1a88d8"/><path d="M1 7 a7 3 0 0 0 14 0 M1 10.5 a7 3 0 0 0 14 0 M3 3.5 a5 2 0 0 0 10 0" stroke="#fff" stroke-width="1.1" fill="none"/></svg>
<div class="t" style="left:290px;top:291.65px;font-size:14.00px;line-height:40px;color:#000;font-weight:400;font-family:'Liberation Sans', sans-serif;">数据库元数据</div>
<svg class="r" style="left:259px;top:328px;" width="18" height="14" viewBox="0 0 18 14"><path d="M4 4 L1 7 L4 10 M6 4 L9 7 L6 10" stroke="#1a88d8" stroke-width="1.1" fill="none"/><path d="M8 1.5 h9 M12.5 1.5 v11 M10.5 12.5 h4" stroke="#1a88d8" stroke-width="1.3"/></svg>
<div class="t" style="left:290px;top:315.65px;font-size:14.00px;line-height:40px;color:#000;font-weight:400;font-family:'Liberation Sans', sans-serif;">数据库全文本</div>
<div class="r" style="left:259px;top:351px;width:281px;height:1px;background:#dadada;"></div>
<div class="t" style="left:290px;top:348.65px;font-size:14.00px;line-height:40px;color:#000;font-weight:400;font-family:'Liberation Sans', sans-serif;">快速搜索(Q)...</div>
<div class="r" style="left:351px;top:375px;width:10.5px;height:1px;background:#000;"></div>
<div class="t" style="left:412.3px;top:348.16px;font-size:15.40px;line-height:40px;color:#000;font-weight:400;font-family:'Liberation Sans', sans-serif;"><span style="font-size:15.40px">Ctrl+Alt+Shift+F</span></div>
</body></html>
